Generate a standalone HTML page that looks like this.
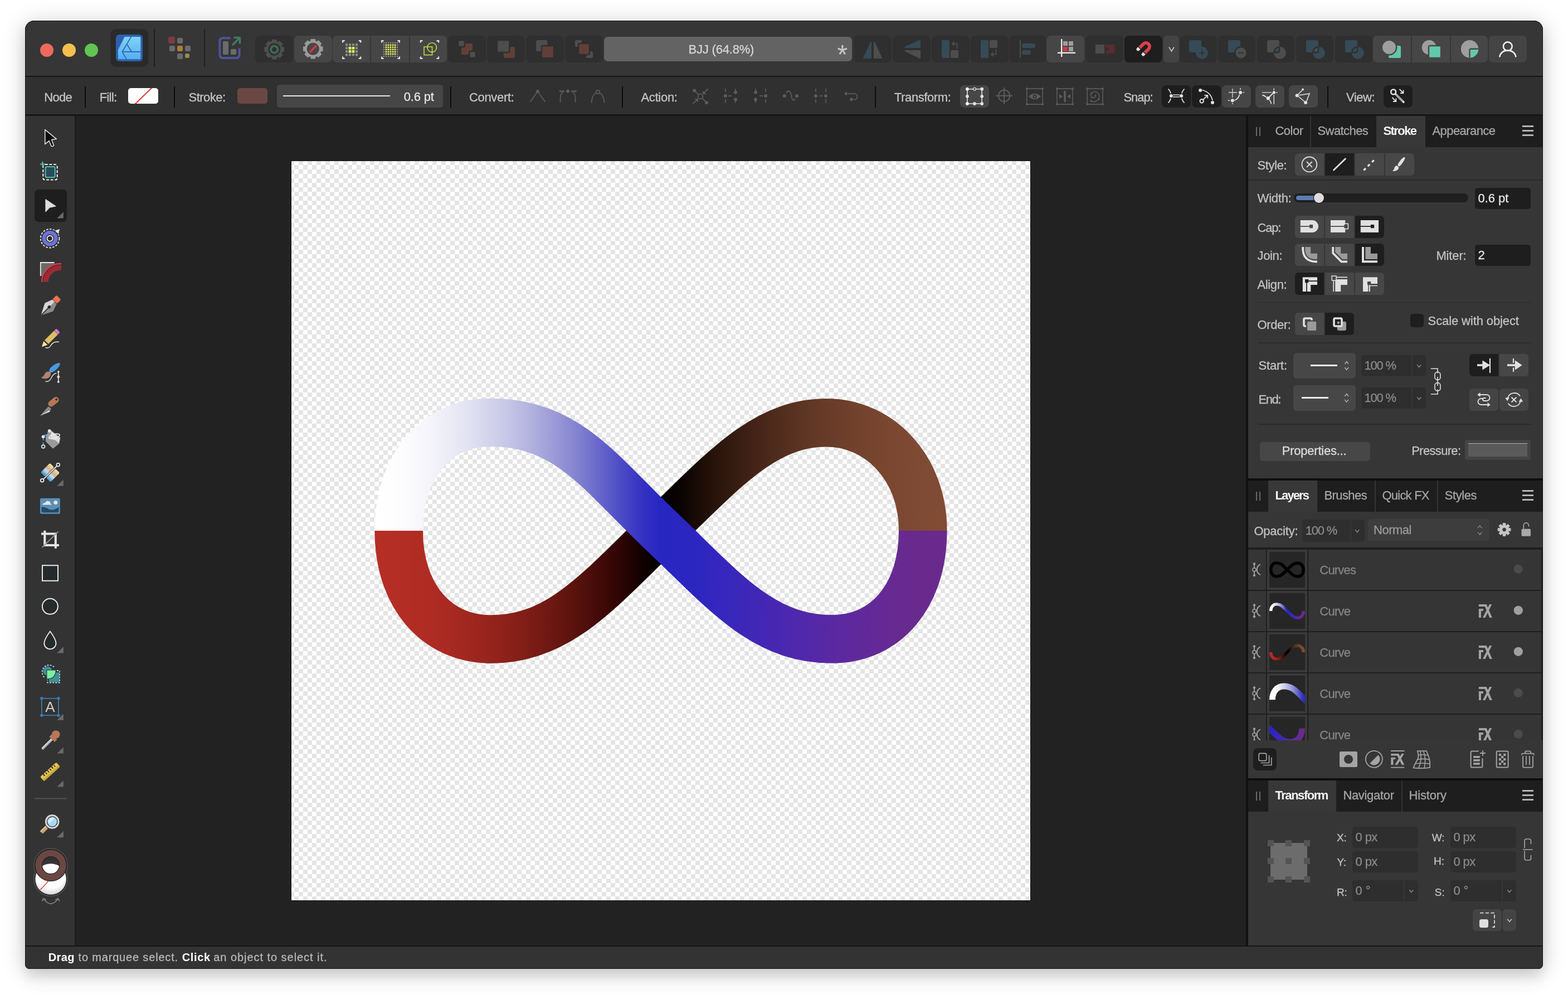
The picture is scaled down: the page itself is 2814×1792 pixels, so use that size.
<!DOCTYPE html>
<html><head><meta charset="utf-8"><title>BJJ - Affinity Designer</title>
<style>
html,body{margin:0;padding:0;}
body{width:2814px;height:1792px;background:#fff;position:relative;overflow:hidden;font-family:"Liberation Sans",sans-serif;}
#shadow{position:absolute;left:45px;top:37px;width:2724px;height:1701px;border-radius:16px 16px 8px 8px;background:#333;box-shadow:0 6px 42px rgba(0,0,0,.22),0 14px 20px rgba(0,0,0,.08);}
#win{will-change:transform;position:absolute;left:0;top:0;width:2814px;height:1792px;clip-path:inset(37px 45px 54px 45px round 16px 16px 8px 8px);}
#win div,#win span,#win svg{position:absolute;display:block;box-sizing:border-box;}
#win span{white-space:pre;line-height:1;-webkit-text-stroke:0.3px currentColor;}
#win svg{overflow:visible;}
</style></head><body>
<div id="shadow"></div>
<div id="win">
<div style="left:45px;top:37px;width:2724px;height:100px;background:#363636;"></div>
<div style="left:45px;top:136px;width:2724px;height:2px;background:#161616;"></div>
<div style="left:45px;top:138px;width:2724px;height:68px;background:#303030;"></div>
<div style="left:45px;top:205px;width:2724px;height:3px;background:#161616;"></div>
<div style="left:45px;top:208px;width:90px;height:1489px;background:#333333;"></div>
<div style="left:134px;top:208px;width:2px;height:1489px;background:#1b1b1b;"></div>
<div style="left:136px;top:208px;width:2100px;height:1489px;background:#222222;"></div>
<div style="left:2236px;top:208px;width:4px;height:1489px;background:#111111;"></div>
<div style="left:2240px;top:208px;width:529px;height:1489px;background:#363636;"></div>
<div style="left:45px;top:1696px;width:2724px;height:2px;background:#151515;"></div>
<div style="left:45px;top:1698px;width:2724px;height:40px;background:#333333;"></div>
<div style="left:522px;top:288px;width:1328px;height:1328px;background:#141414;"></div>
<div style="left:523px;top:289px;width:1326px;height:1326px;background-color:#fff;background-image:conic-gradient(#e4e4e4 25%,#fff 0 50%,#e4e4e4 0 75%,#fff 0);background-size:16px 16px;background-position:-11px -1px;"></div>
<svg style="left:523px;top:289px;" width="1326" height="1326" viewBox="523 289 1326 1326"><defs><linearGradient id="gA" gradientUnits="userSpaceOnUse" x1="672.4" y1="0" x2="1699.6" y2="0"><stop offset="0.0000" stop-color="#ffffff"/><stop offset="0.0312" stop-color="#fefefe"/><stop offset="0.0625" stop-color="#fafafd"/><stop offset="0.0938" stop-color="#f5f5fa"/><stop offset="0.1250" stop-color="#ededf7"/><stop offset="0.1562" stop-color="#e4e4f3"/><stop offset="0.1875" stop-color="#d9d8ee"/><stop offset="0.2188" stop-color="#cccce9"/><stop offset="0.2500" stop-color="#bdbde3"/><stop offset="0.2812" stop-color="#adadde"/><stop offset="0.3125" stop-color="#9c9bd8"/><stop offset="0.3438" stop-color="#8988d2"/><stop offset="0.3750" stop-color="#7473cd"/><stop offset="0.4062" stop-color="#5e5dc9"/><stop offset="0.4375" stop-color="#4746c5"/><stop offset="0.4688" stop-color="#3231c3"/><stop offset="0.5000" stop-color="#2826c2"/><stop offset="0.5312" stop-color="#2926c1"/><stop offset="0.5625" stop-color="#2d26c0"/><stop offset="0.5938" stop-color="#3326be"/><stop offset="0.6250" stop-color="#3927bb"/><stop offset="0.6562" stop-color="#3f27b7"/><stop offset="0.6875" stop-color="#4527b3"/><stop offset="0.7188" stop-color="#4b28af"/><stop offset="0.7500" stop-color="#5128aa"/><stop offset="0.7812" stop-color="#5628a5"/><stop offset="0.8125" stop-color="#5b29a0"/><stop offset="0.8438" stop-color="#5f299b"/><stop offset="0.8750" stop-color="#632996"/><stop offset="0.9062" stop-color="#662a92"/><stop offset="0.9375" stop-color="#682a8f"/><stop offset="0.9688" stop-color="#6a2a8d"/><stop offset="1" stop-color="#6a2a8c"/></linearGradient><linearGradient id="gB" gradientUnits="userSpaceOnUse" x1="672.4" y1="0" x2="1699.6" y2="0"><stop offset="0.0000" stop-color="#b62e25"/><stop offset="0.0312" stop-color="#b52e25"/><stop offset="0.0625" stop-color="#b22d24"/><stop offset="0.0938" stop-color="#ae2c23"/><stop offset="0.1250" stop-color="#a92a22"/><stop offset="0.1562" stop-color="#a22820"/><stop offset="0.1875" stop-color="#99251e"/><stop offset="0.2188" stop-color="#90221b"/><stop offset="0.2500" stop-color="#851f18"/><stop offset="0.2812" stop-color="#791b15"/><stop offset="0.3125" stop-color="#6b1712"/><stop offset="0.3438" stop-color="#5d130e"/><stop offset="0.3750" stop-color="#4c0e0a"/><stop offset="0.4062" stop-color="#3b0806"/><stop offset="0.4375" stop-color="#270403"/><stop offset="0.4688" stop-color="#100101"/><stop offset="0.5000" stop-color="#000000"/><stop offset="0.5312" stop-color="#080301"/><stop offset="0.5625" stop-color="#190a05"/><stop offset="0.5938" stop-color="#27130a"/><stop offset="0.6250" stop-color="#341b10"/><stop offset="0.6562" stop-color="#402216"/><stop offset="0.6875" stop-color="#4b291b"/><stop offset="0.7188" stop-color="#542f1f"/><stop offset="0.7500" stop-color="#5d3523"/><stop offset="0.7812" stop-color="#653a27"/><stop offset="0.8125" stop-color="#6c3e2a"/><stop offset="0.8438" stop-color="#72422d"/><stop offset="0.8750" stop-color="#77452f"/><stop offset="0.9062" stop-color="#7b4731"/><stop offset="0.9375" stop-color="#7e4933"/><stop offset="0.9688" stop-color="#804b34"/><stop offset="1" stop-color="#814b34"/></linearGradient></defs><path d="M715.7,951.9 C715.7,1067.4 781.5,1146.6 882,1146.6 C1004.6,1146.6 1077.5,1056.1 1186,951.9 C1302.0,839.4 1373.4,758.3 1483.4,758.3 C1576.9,758.3 1656.3,837.7 1656.3,951.9" fill="none" stroke="url(#gB)" stroke-width="86.6"/><path d="M715.7,951.9 C715.7,840.9 779.3,757.8 880,757.8 C1020.0,757.8 1078.0,850.4 1186,951.9 C1299.4,1059.6 1368.2,1146.4 1493.2,1146.4 C1591.3,1146.4 1656.3,1066.9 1656.3,951.9" fill="none" stroke="url(#gA)" stroke-width="86.6"/></svg>
<div style="left:72px;top:78px;width:24px;height:24px;background:#ed6a5e;border-radius:12px;"></div>
<div style="left:112px;top:78px;width:24px;height:24px;background:#f5bf4f;border-radius:12px;"></div>
<div style="left:152px;top:78px;width:24px;height:24px;background:#61c554;border-radius:12px;"></div>
<div style="left:198px;top:52px;width:68px;height:68px;background:#2a2a2a;border-radius:10px;"></div>
<svg style="left:208px;top:62px;" width="48" height="48" viewBox="0 0 48 48"><defs><linearGradient id="afg" x1="0" y1="0" x2="0" y2="1"><stop offset="0" stop-color="#7fd4fa"/><stop offset="1" stop-color="#56aef0"/></linearGradient></defs><rect width="48" height="48" rx="6" fill="#2d61ad"/><path d="M15.7 3.9H42.3Q44.3 3.9 44.3 5.9V42.3Q44.3 44.3 42.3 44.3H5.9Q3.9 44.3 3.9 42.3V27.5Z" fill="url(#afg)"/><path d="M27.5 3.9L11.4 30.8L19 44.3M11.4 30.8H44.3M20.2 17.9L28 30.5" fill="none" stroke="#2d61ad" stroke-width="1.7"/></svg>
<div style="left:276px;top:52px;width:2px;height:68px;background:#1f1f1f;"></div>
<svg style="left:0px;top:0px;" width="2814" height="1792" viewBox="0 0 2814 1792"><rect x="302" y="66" width="12" height="12" rx="2.5" fill="#7a3b45"/><rect x="318" y="68" width="10" height="10" rx="2.5" fill="#6b6b6b"/><rect x="304" y="82" width="10" height="10" rx="2.5" fill="#6b6b6b"/><rect x="318" y="82" width="10" height="10" rx="2.5" fill="#b07a3c"/><rect x="332" y="82" width="10" height="10" rx="2.5" fill="#6b6b6b"/><rect x="318" y="96" width="10" height="10" rx="2.5" fill="#6b6b6b"/><rect x="332" y="96" width="8" height="8" rx="2.5" fill="#9a8a4a"/></svg>
<div style="left:366px;top:52px;width:2px;height:68px;background:#1f1f1f;"></div>
<svg style="left:0px;top:0px;" width="2814" height="1792" viewBox="0 0 2814 1792"><path d="M412 68.3H400Q394.4 68.3 394.4 74V98Q394.4 103.9 400 103.9H424Q429.6 103.9 429.6 98V88" fill="none" stroke="#4f5496" stroke-width="4" stroke-linecap="round"/><rect x="400" y="74" width="10" height="24" rx="2" fill="#6b6b6b"/><rect x="414" y="88" width="10" height="10" rx="2" fill="#6b6b6b"/><path d="M418 80L430 68M421 67.5H430.5V77" fill="none" stroke="#3d7a68" stroke-width="3.4" stroke-linecap="round" stroke-linejoin="round"/></svg>
<div style="left:458px;top:64px;width:67.5px;height:48px;background:#2f2f2f;border-radius:8px;"></div>
<div style="left:528px;top:64px;width:67.5px;height:48px;background:#464646;border-radius:8px;"></div>
<div style="left:597px;top:64px;width:205px;height:48px;background:#464646;border-radius:8px;"></div>
<div style="left:664.3px;top:64px;width:1.6px;height:48px;background:#363636;"></div>
<div style="left:734.3px;top:64px;width:1.6px;height:48px;background:#363636;"></div>
<div style="left:804.3px;top:64px;width:67.6px;height:48px;background:#2f2f2f;border-radius:8px;"></div>
<div style="left:874px;top:64px;width:67.6px;height:48px;background:#2f2f2f;border-radius:8px;"></div>
<div style="left:944px;top:64px;width:67.6px;height:48px;background:#2f2f2f;border-radius:8px;"></div>
<div style="left:1014px;top:64px;width:67.6px;height:48px;background:#2f2f2f;border-radius:8px;"></div>
<div style="left:1084px;top:66px;width:445px;height:44px;background:#636363;border-radius:7px;"></div>
<div style="left:1532.3px;top:64px;width:67.5px;height:48px;background:#2f2f2f;border-radius:8px;"></div>
<div style="left:1602.3px;top:64px;width:67.5px;height:48px;background:#2f2f2f;border-radius:8px;"></div>
<div style="left:1672px;top:64px;width:67.5px;height:48px;background:#2f2f2f;border-radius:8px;"></div>
<div style="left:1742.2px;top:64px;width:67.5px;height:48px;background:#2f2f2f;border-radius:8px;"></div>
<div style="left:1810.5px;top:64px;width:67.5px;height:48px;background:#2f2f2f;border-radius:8px;"></div>
<div style="left:1878px;top:64px;width:68px;height:48px;background:#464646;border-radius:8px;"></div>
<div style="left:1948px;top:64px;width:67.7px;height:48px;background:#2f2f2f;border-radius:8px;"></div>
<div style="left:2018.3px;top:64px;width:67.7px;height:48px;background:#1e1e1e;border-radius:8px;"></div>
<div style="left:2088.2px;top:64px;width:27.8px;height:48px;background:#444444;border-radius:7px;"></div>
<div style="left:2117.2px;top:64px;width:67.2px;height:48px;background:#2f2f2f;border-radius:8px;"></div>
<div style="left:2186.3px;top:64px;width:67.2px;height:48px;background:#2f2f2f;border-radius:8px;"></div>
<div style="left:2256.2px;top:64px;width:67.2px;height:48px;background:#2f2f2f;border-radius:8px;"></div>
<div style="left:2326.2px;top:64px;width:67.2px;height:48px;background:#2f2f2f;border-radius:8px;"></div>
<div style="left:2396.3px;top:64px;width:67.2px;height:48px;background:#2f2f2f;border-radius:8px;"></div>
<div style="left:2464.2px;top:64px;width:205.8px;height:48px;background:#464646;border-radius:8px;"></div>
<div style="left:2532px;top:64px;width:1.8px;height:48px;background:#363636;"></div>
<div style="left:2602px;top:64px;width:1.8px;height:48px;background:#363636;"></div>
<div style="left:2672px;top:64px;width:68px;height:48px;background:#444444;border-radius:8px;"></div>
<span style="left:1235.5px;top:77.7px;font-size:22px;color:#d6d6d6;letter-spacing:-0.19px;">BJJ (64.8%)</span>
<span style="left:1502.6px;top:73.8px;font-size:48px;color:#c8c8c8;-webkit-text-stroke:0;">*</span>
<svg style="left:0px;top:0px;" width="2814" height="1792" viewBox="0 0 2814 1792"><path d="M488.4 74.8 L488.6 71.6 L495.8 71.6 L496.0 74.8 L499.2 76.2 L501.7 74.0 L506.8 79.1 L504.6 81.6 L506.0 84.8 L509.2 85.0 L509.2 92.2 L506.0 92.4 L504.6 95.6 L506.8 98.1 L501.7 103.2 L499.2 101.0 L496.0 102.4 L495.8 105.6 L488.6 105.6 L488.4 102.4 L485.2 101.0 L482.7 103.2 L477.6 98.1 L479.8 95.6 L478.4 92.4 L475.2 92.2 L475.2 85.0 L478.4 84.8 L479.8 81.6 L477.6 79.1 L482.7 74.0 L485.2 76.2Z M480.4 88.6 a11.8 11.8 0 1 0 23.6 0 a11.8 11.8 0 1 0 -23.6 0Z" fill="#4f4f4f" fill-rule="evenodd" stroke="#4f4f4f" stroke-width="1.6" stroke-linejoin="round"/><circle cx="492.2" cy="88.6" r="6.2" fill="none" stroke="#3b6b4e" stroke-width="4"/><path d="M558.0 73.9 L558.2 70.7 L565.4 70.7 L565.6 73.9 L568.8 75.3 L571.3 73.1 L576.4 78.2 L574.2 80.7 L575.6 83.9 L578.8 84.1 L578.8 91.3 L575.6 91.5 L574.2 94.7 L576.4 97.2 L571.3 102.3 L568.8 100.1 L565.6 101.5 L565.4 104.7 L558.2 104.7 L558.0 101.5 L554.8 100.1 L552.3 102.3 L547.2 97.2 L549.4 94.7 L548.0 91.5 L544.8 91.3 L544.8 84.1 L548.0 83.9 L549.4 80.7 L547.2 78.2 L552.3 73.1 L554.8 75.3Z M550.0 87.7 a11.8 11.8 0 1 0 23.6 0 a11.8 11.8 0 1 0 -23.6 0Z" fill="#9a9a9a" fill-rule="evenodd" stroke="#9a9a9a" stroke-width="1.6" stroke-linejoin="round"/><path d="M556.2 94L567.8 81.6" stroke="#d9363e" stroke-width="3.6"/><path d="M618.6 73.1H615.1V76.6" fill="none" stroke="#e4e4e4" stroke-width="2.2"/><path d="M643.8 73.1H647.3V76.6" fill="none" stroke="#e4e4e4" stroke-width="2.2"/><path d="M618.6 104.9H615.1V101.4" fill="none" stroke="#e4e4e4" stroke-width="2.2"/><path d="M643.8 104.9H647.3V101.4" fill="none" stroke="#e4e4e4" stroke-width="2.2"/><rect x="620.0" y="78.3" width="4" height="4" fill="#8f8f8f"/><rect x="620.0" y="84.3" width="4" height="4" fill="#8f8f8f"/><rect x="620.0" y="90.3" width="4" height="4" fill="#8f8f8f"/><rect x="620.0" y="96.3" width="4" height="4" fill="#8f8f8f"/><rect x="626.0" y="78.3" width="4" height="4" fill="#8f8f8f"/><rect x="625.6" y="83.9" width="4.8" height="4.8" fill="#e6f25a"/><rect x="625.6" y="89.9" width="4.8" height="4.8" fill="#e6f25a"/><rect x="626.0" y="96.3" width="4" height="4" fill="#8f8f8f"/><rect x="632.0" y="78.3" width="4" height="4" fill="#8f8f8f"/><rect x="631.6" y="83.9" width="4.8" height="4.8" fill="#e6f25a"/><rect x="631.6" y="89.9" width="4.8" height="4.8" fill="#e6f25a"/><rect x="632.0" y="96.3" width="4" height="4" fill="#8f8f8f"/><rect x="638.0" y="78.3" width="4" height="4" fill="#8f8f8f"/><rect x="638.0" y="84.3" width="4" height="4" fill="#8f8f8f"/><rect x="638.0" y="90.3" width="4" height="4" fill="#8f8f8f"/><rect x="638.0" y="96.3" width="4" height="4" fill="#8f8f8f"/><path d="M688.6 73.1H685.1V76.6" fill="none" stroke="#e4e4e4" stroke-width="2.2"/><path d="M713.4 73.1H716.9V76.6" fill="none" stroke="#e4e4e4" stroke-width="2.2"/><path d="M688.6 104.9H685.1V101.4" fill="none" stroke="#e4e4e4" stroke-width="2.2"/><path d="M713.4 104.9H716.9V101.4" fill="none" stroke="#e4e4e4" stroke-width="2.2"/><rect x="687.8" y="75.7" width="2.2" height="2.2" fill="#8f8f8f"/><rect x="687.8" y="79.7" width="2.2" height="2.2" fill="#8f8f8f"/><rect x="687.8" y="83.8" width="2.2" height="2.2" fill="#8f8f8f"/><rect x="687.8" y="87.8" width="2.2" height="2.2" fill="#8f8f8f"/><rect x="687.8" y="91.8" width="2.2" height="2.2" fill="#8f8f8f"/><rect x="687.8" y="95.8" width="2.2" height="2.2" fill="#8f8f8f"/><rect x="687.8" y="99.9" width="2.2" height="2.2" fill="#8f8f8f"/><rect x="691.8" y="75.7" width="2.2" height="2.2" fill="#8f8f8f"/><rect x="691.6" y="79.5" width="2.7" height="2.7" fill="#e6f25a"/><rect x="691.6" y="83.5" width="2.7" height="2.7" fill="#e6f25a"/><rect x="691.6" y="87.5" width="2.7" height="2.7" fill="#e6f25a"/><rect x="691.6" y="91.6" width="2.7" height="2.7" fill="#e6f25a"/><rect x="691.6" y="95.6" width="2.7" height="2.7" fill="#e6f25a"/><rect x="691.8" y="99.9" width="2.2" height="2.2" fill="#8f8f8f"/><rect x="695.9" y="75.7" width="2.2" height="2.2" fill="#8f8f8f"/><rect x="695.6" y="79.5" width="2.7" height="2.7" fill="#e6f25a"/><rect x="695.6" y="83.5" width="2.7" height="2.7" fill="#e6f25a"/><rect x="695.6" y="87.5" width="2.7" height="2.7" fill="#e6f25a"/><rect x="695.6" y="91.6" width="2.7" height="2.7" fill="#e6f25a"/><rect x="695.6" y="95.6" width="2.7" height="2.7" fill="#e6f25a"/><rect x="695.9" y="99.9" width="2.2" height="2.2" fill="#8f8f8f"/><rect x="699.9" y="75.7" width="2.2" height="2.2" fill="#8f8f8f"/><rect x="699.6" y="79.5" width="2.7" height="2.7" fill="#e6f25a"/><rect x="699.6" y="83.5" width="2.7" height="2.7" fill="#e6f25a"/><rect x="699.6" y="87.5" width="2.7" height="2.7" fill="#e6f25a"/><rect x="699.6" y="91.6" width="2.7" height="2.7" fill="#e6f25a"/><rect x="699.6" y="95.6" width="2.7" height="2.7" fill="#e6f25a"/><rect x="699.9" y="99.9" width="2.2" height="2.2" fill="#8f8f8f"/><rect x="703.9" y="75.7" width="2.2" height="2.2" fill="#8f8f8f"/><rect x="703.7" y="79.5" width="2.7" height="2.7" fill="#e6f25a"/><rect x="703.7" y="83.5" width="2.7" height="2.7" fill="#e6f25a"/><rect x="703.7" y="87.5" width="2.7" height="2.7" fill="#e6f25a"/><rect x="703.7" y="91.6" width="2.7" height="2.7" fill="#e6f25a"/><rect x="703.7" y="95.6" width="2.7" height="2.7" fill="#e6f25a"/><rect x="703.9" y="99.9" width="2.2" height="2.2" fill="#8f8f8f"/><rect x="708.0" y="75.7" width="2.2" height="2.2" fill="#8f8f8f"/><rect x="707.7" y="79.5" width="2.7" height="2.7" fill="#e6f25a"/><rect x="707.7" y="83.5" width="2.7" height="2.7" fill="#e6f25a"/><rect x="707.7" y="87.5" width="2.7" height="2.7" fill="#e6f25a"/><rect x="707.7" y="91.6" width="2.7" height="2.7" fill="#e6f25a"/><rect x="707.7" y="95.6" width="2.7" height="2.7" fill="#e6f25a"/><rect x="708.0" y="99.9" width="2.2" height="2.2" fill="#8f8f8f"/><rect x="712.0" y="75.7" width="2.2" height="2.2" fill="#8f8f8f"/><rect x="712.0" y="79.7" width="2.2" height="2.2" fill="#8f8f8f"/><rect x="712.0" y="83.8" width="2.2" height="2.2" fill="#8f8f8f"/><rect x="712.0" y="87.8" width="2.2" height="2.2" fill="#8f8f8f"/><rect x="712.0" y="91.8" width="2.2" height="2.2" fill="#8f8f8f"/><rect x="712.0" y="95.8" width="2.2" height="2.2" fill="#8f8f8f"/><rect x="712.0" y="99.9" width="2.2" height="2.2" fill="#8f8f8f"/><path d="M758.4 73.1H754.9V76.6" fill="none" stroke="#e4e4e4" stroke-width="2.2"/><path d="M783.6 73.1H787.1V76.6" fill="none" stroke="#e4e4e4" stroke-width="2.2"/><path d="M758.4 104.9H754.9V101.4" fill="none" stroke="#e4e4e4" stroke-width="2.2"/><path d="M783.6 104.9H787.1V101.4" fill="none" stroke="#e4e4e4" stroke-width="2.2"/><rect x="761" y="84" width="14.6" height="14.6" fill="none" stroke="#c5d945" stroke-width="1.6"/><circle cx="775.2" cy="85.1" r="8.3" fill="none" stroke="#c5d945" stroke-width="1.6"/><rect x="822" y="72" width="12" height="12" rx="2.5" fill="#4d4d4d"/><rect x="842" y="92" width="12" height="12" rx="2.5" fill="#4d4d4d"/><rect x="828" y="78" width="20" height="20" rx="2.5" fill="#613f37"/><rect x="822" y="72" width="12" height="12" rx="2.5" fill="#4d4d4d" stroke="#2f2f2f" stroke-width="2.4"/><rect x="842" y="92" width="12" height="12" rx="2.5" fill="#4d4d4d" stroke="#2f2f2f" stroke-width="2.4"/><rect x="904" y="84" width="20" height="20" rx="2.5" fill="#613f37"/><rect x="892" y="72" width="22.4" height="22" rx="2.5" fill="#4d4d4d" stroke="#2f2f2f" stroke-width="2.4"/><rect x="962.2" y="72" width="20" height="20" rx="2.5" fill="#4d4d4d"/><rect x="972" y="82" width="22" height="22" rx="2.5" fill="#613f37" stroke="#2f2f2f" stroke-width="2.4"/><rect x="1032" y="72" width="12" height="12" rx="2.5" fill="#4d4d4d"/><rect x="1052" y="92" width="12" height="12" rx="2.5" fill="#4d4d4d"/><rect x="1038" y="78" width="20" height="20" rx="2.5" fill="#613f37" stroke="#2f2f2f" stroke-width="2.4"/><path d="M1550 104L1563 75.8V104Z" fill="#364a57" stroke="#364a57" stroke-width="2" stroke-linejoin="round"/><path d="M1582 104L1569 75.8V104Z" fill="#4d4d4d" stroke="#4d4d4d" stroke-width="2" stroke-linejoin="round"/><path d="M1624.5 85L1651 72.2V85Z" fill="#364a57" stroke="#364a57" stroke-width="2" stroke-linejoin="round"/><path d="M1624.5 91L1651 104V91Z" fill="#4d4d4d" stroke="#4d4d4d" stroke-width="2" stroke-linejoin="round"/><rect x="1690" y="72" width="14" height="32" rx="2" fill="#364a57"/><rect x="1706" y="90" width="14" height="14" rx="2" fill="#4d4d4d"/><path d="M1709.5 78.5H1717.5V87.5M1712.5 75L1709 78.5L1712.5 82" fill="none" stroke="#4d4d4d" stroke-width="1.8"/><rect x="1760" y="72" width="14" height="32" rx="2" fill="#364a57"/><rect x="1776" y="72" width="14" height="14" rx="2" fill="#4d4d4d"/><path d="M1787.5 88.5V97.5H1779M1782.5 94L1779 97.5L1782.5 101" fill="none" stroke="#4d4d4d" stroke-width="1.8"/><rect x="1830" y="72" width="2" height="32" fill="#4d4d4d"/><rect x="1834" y="78" width="24" height="8" rx="3" fill="#364a57"/><rect x="1834" y="90" width="16" height="8" rx="3" fill="#364a57"/><rect x="1904" y="70" width="2.4" height="32" fill="#e8e8e8"/><rect x="1898" y="93.6" width="32" height="2.4" fill="#e8e8e8"/><rect x="1908" y="74" width="8" height="8" fill="#9e9e9e"/><rect x="1918" y="74" width="8" height="8" fill="#9e9e9e"/><rect x="1918" y="84" width="8" height="8" fill="#9e9e9e"/><rect x="1908" y="84" width="8" height="8" fill="#d9363e"/><rect x="1966" y="80" width="16" height="16" fill="#4d4d4d"/><path d="M1984 80H2000V96H1984V92L1992 88L1984 84Z" fill="#5a2c30"/><g transform="translate(2056.5 83.5) rotate(45)"><path d="M-6.5 9.2V0A6.5 6.5 0 0 1 6.5 0V9.2" fill="none" stroke="#d9404a" stroke-width="6"/><path d="M-9.5 10.5h6v2.8a3 3 0 0 1-6 0zM3.5 10.5h6v2.8a3 3 0 0 1-6 0z" fill="#dcdcdc"/></g><path d="M2098 84.5L2102.5 92L2107 84.5" fill="none" stroke="#c8c8c8" stroke-width="1.6"/><rect x="2134" y="72" width="22" height="22" rx="3" fill="#364a57"/><circle cx="2157" cy="94.8" r="10.8" fill="#364a57"/><path d="M2152 94.8H2162M2157 89.8V99.8" stroke="#2f2f2f" stroke-width="1.8"/><rect x="2204" y="72" width="22" height="22" rx="3" fill="#364a57"/><circle cx="2227" cy="94.8" r="10.8" fill="#4d4d4d" stroke="#2f2f2f" stroke-width="2.4"/><path d="M2222 94.8H2232" stroke="#2f2f2f" stroke-width="1.8"/><rect x="2274" y="72" width="22" height="22" rx="3" fill="#4d4d4d"/><circle cx="2297" cy="94.8" r="10.8" fill="#4d4d4d"/><clipPath id="ca"><rect x="2274" y="72" width="22" height="22" rx="3"/></clipPath><circle cx="2297" cy="94.8" r="10.8" fill="#364a57" stroke="#2f2f2f" stroke-width="2.4" clip-path="url(#ca)"/><clipPath id="cab"><circle cx="2297" cy="94.8" r="10.8"/></clipPath><rect x="2274" y="72" width="22" height="22" rx="3" fill="none" stroke="#2f2f2f" stroke-width="2.4" clip-path="url(#cab)"/><rect x="2344" y="72" width="22" height="22" rx="3" fill="#364a57"/><circle cx="2367" cy="94.8" r="10.8" fill="#364a57"/><clipPath id="cb"><rect x="2344" y="72" width="22" height="22" rx="3"/></clipPath><circle cx="2367" cy="94.8" r="10.8" fill="#4d4d4d" stroke="#2f2f2f" stroke-width="2.4" clip-path="url(#cb)"/><clipPath id="cbb"><circle cx="2367" cy="94.8" r="10.8"/></clipPath><rect x="2344" y="72" width="22" height="22" rx="3" fill="none" stroke="#2f2f2f" stroke-width="2.4" clip-path="url(#cbb)"/><rect x="2414" y="72" width="22" height="22" rx="3" fill="#364a57"/><circle cx="2437" cy="94.8" r="10.8" fill="#364a57"/><clipPath id="cc"><rect x="2414" y="72" width="22" height="22" rx="3"/></clipPath><circle cx="2437" cy="94.8" r="10.8" fill="#364a57" stroke="#2f2f2f" stroke-width="2.4" clip-path="url(#cc)"/><clipPath id="ccb"><circle cx="2437" cy="94.8" r="10.8"/></clipPath><rect x="2414" y="72" width="22" height="22" rx="3" fill="none" stroke="#2f2f2f" stroke-width="2.4" clip-path="url(#ccb)"/><rect x="2492" y="82" width="22" height="22" rx="2.5" fill="#62c8ab"/><circle cx="2493" cy="85.1" r="13.2" fill="#9e9e9e" stroke="#464646" stroke-width="2.4"/><circle cx="2564.7" cy="85.1" r="13" fill="#9e9e9e"/><rect x="2564" y="82" width="22" height="22" rx="2.5" fill="#62c8ab" stroke="#464646" stroke-width="2.4"/><circle cx="2637.5" cy="87.8" r="15.7" fill="#9e9e9e"/><clipPath id="cq"><circle cx="2637.5" cy="87.8" r="15.7"/></clipPath><rect x="2637.5" y="87.8" width="20" height="20" rx="2.5" fill="#62c8ab" stroke="#464646" stroke-width="2.4" clip-path="url(#cq)"/><circle cx="2705.8" cy="83.2" r="7.8" fill="none" stroke="#f0f0f0" stroke-width="2.6"/><path d="M2691.3 102.3A14.6 13 0 0 1 2720.4 102.3" fill="none" stroke="#f0f0f0" stroke-width="2.6"/></svg>
<span style="left:79.3px;top:163.7px;font-size:22px;color:#c4c4c4;letter-spacing:-0.73px;">Node</span>
<div style="left:152px;top:154.5px;width:2px;height:38px;background:#0c0c0c;"></div>
<span style="left:178.8px;top:163.7px;font-size:22px;color:#c4c4c4;letter-spacing:-0.75px;">Fill:</span>
<div style="left:229.8px;top:157.8px;width:54.4px;height:28.4px;background:#ffffff;border-radius:5px;overflow:hidden;"><svg style="left:0;top:0" width="54" height="28"><path d="M12 29L43 -1" stroke="#e8332c" stroke-width="2"/></svg></div>
<div style="left:312px;top:154.5px;width:2px;height:38px;background:#0c0c0c;"></div>
<span style="left:338.5px;top:163.7px;font-size:22px;color:#c4c4c4;letter-spacing:-0.53px;">Stroke:</span>
<div style="left:425.7px;top:157.8px;width:54.6px;height:28.4px;background:#6b4744;border-radius:5px;"></div>
<div style="left:497px;top:152px;width:298px;height:41px;background:#464646;border-radius:5px;"></div>
<div style="left:507.5px;top:171px;width:192.5px;height:2.2px;background:#e8e8e8;"></div>
<span style="left:724.7px;top:162.7px;font-size:22px;color:#e4e4e4;letter-spacing:-0.15px;">0.6 pt</span>
<div style="left:808px;top:154.5px;width:2px;height:38px;background:#0c0c0c;"></div>
<span style="left:842.0px;top:163.7px;font-size:22px;color:#c4c4c4;letter-spacing:-0.33px;">Convert:</span>
<div style="left:1116px;top:154.5px;width:2px;height:38px;background:#0c0c0c;"></div>
<span style="left:1150.4px;top:163.7px;font-size:22px;color:#c4c4c4;letter-spacing:-0.28px;">Action:</span>
<div style="left:1570px;top:154.5px;width:2px;height:38px;background:#0c0c0c;"></div>
<span style="left:1605.0px;top:163.7px;font-size:22px;color:#c4c4c4;letter-spacing:-0.42px;">Transform:</span>
<div style="left:1723.2px;top:153px;width:51.5px;height:40px;background:#474747;border-radius:8px;"></div>
<span style="left:2016.5px;top:163.7px;font-size:22px;color:#c4c4c4;letter-spacing:-1.07px;">Snap:</span>
<div style="left:2085px;top:153px;width:51.8px;height:40px;background:#1e1e1e;border-radius:8px;"></div>
<div style="left:2139.2px;top:153px;width:51.8px;height:40px;background:#1e1e1e;border-radius:8px;"></div>
<div style="left:2193.2px;top:153px;width:51.8px;height:40px;background:#464646;border-radius:8px;"></div>
<div style="left:2253px;top:153px;width:51.8px;height:40px;background:#464646;border-radius:8px;"></div>
<div style="left:2312.8px;top:153px;width:52.2px;height:40px;background:#464646;border-radius:8px;"></div>
<div style="left:2382px;top:154.5px;width:2px;height:38px;background:#0c0c0c;"></div>
<span style="left:2416.0px;top:163.7px;font-size:22px;color:#c4c4c4;letter-spacing:-0.50px;">View:</span>
<div style="left:2483px;top:153px;width:52px;height:40px;background:#1e1e1e;border-radius:8px;"></div>
<svg style="left:0px;top:0px;" width="2814" height="1792" viewBox="0 0 2814 1792"><path d="M951.4 183L964.8 164L978.6 183" fill="none" stroke="#5c5c5c" stroke-width="1.8" /><circle cx="964.8" cy="164" r="3" fill="#5c5c5c"/><path d="M1005.6 183.4V176Q1005.6 166 1013 163.5H1005.5M1032.5 183.4V176Q1032.5 166 1025 163.5H1033" fill="none" stroke="#5c5c5c" stroke-width="1.8" /><circle cx="1019" cy="163.6" r="3" fill="#5c5c5c"/><circle cx="1005.5" cy="163.5" r="1.8" fill="#5c5c5c"/><circle cx="1033" cy="163.5" r="1.8" fill="#5c5c5c"/><path d="M1061.5 184.5Q1062.5 170 1069.5 167M1084.5 184.5Q1083.5 170 1076.5 167" fill="none" stroke="#5c5c5c" stroke-width="1.8" /><circle cx="1073" cy="165" r="3.2" fill="none" stroke="#5c5c5c" stroke-width="1.8"/><circle cx="1256.9" cy="172.9" r="4.4" fill="none" stroke="#5c5c5c" stroke-width="1.8"/><circle cx="1246.1" cy="162.4" r="3" fill="#5c5c5c"/><circle cx="1268.1" cy="184.2" r="3" fill="#5c5c5c"/><path d="M1246.1 162.4L1253.5 169.5M1268.1 184.2L1260.5 176.3M1270.5 159.5L1263 167M1243.5 186.3L1251 178.8" fill="none" stroke="#5c5c5c" stroke-width="1.8" /><path d="M1261.5 163.5V168.5H1266.5ZM1252.5 182.5V177.3H1247.3Z" fill="#5c5c5c" stroke="#5c5c5c" stroke-width="1"/><path d="M1301.9 159V165M1301.9 178V184.6M1307 172H1312.7M1319.9 159V165M1319.9 178.6V184.6" fill="none" stroke="#5c5c5c" stroke-width="1.8" /><circle cx="1301.9" cy="172" r="3" fill="#5c5c5c"/><circle cx="1319.9" cy="165.7" r="3" fill="#5c5c5c"/><circle cx="1319.9" cy="178.6" r="3" fill="#5c5c5c"/><path d="M1356 159V165M1356 178.6V184.6M1363 172H1368.7M1374 159V165M1374 178V184.6" fill="none" stroke="#5c5c5c" stroke-width="1.8" /><circle cx="1374" cy="172" r="3" fill="#5c5c5c"/><circle cx="1356" cy="165.7" r="3" fill="#5c5c5c"/><circle cx="1356" cy="178.6" r="3" fill="#5c5c5c"/><circle cx="1407.9" cy="172" r="3" fill="#5c5c5c"/><circle cx="1430" cy="172" r="3" fill="#5c5c5c"/><path d="M1411 167Q1415 160 1418.5 166Q1419.5 168 1420.5 174Q1423 184 1427 177" fill="none" stroke="#5c5c5c" stroke-width="1.8" /><path d="M1464 159V165M1464 178V184.6M1470.5 172H1476M1482 159V165M1482 178V184.6" fill="none" stroke="#5c5c5c" stroke-width="1.8" /><circle cx="1464" cy="172" r="3" fill="#5c5c5c"/><circle cx="1482" cy="172" r="3" fill="#5c5c5c"/><path d="M1521 168.1H1534A5.3 5.3 0 0 1 1534 178.6H1532" fill="none" stroke="#5c5c5c" stroke-width="1.8" /><circle cx="1528" cy="178.2" r="3" fill="#5c5c5c"/><path d="M1514.5 168.1L1520 164.6V171.6Z" fill="#5c5c5c"/><path d="M1735.9 159.7H1762.2V186H1735.9Z" fill="none" stroke="#e2e2e2" stroke-width="1.6" /><circle cx="1735.9" cy="159.7" r="2.9" fill="#f4f4f4"/><circle cx="1762.2" cy="159.7" r="2.9" fill="#e2e2e2"/><circle cx="1735.9" cy="172.8" r="2.9" fill="#e2e2e2"/><circle cx="1762.2" cy="172.8" r="2.9" fill="#e2e2e2"/><circle cx="1735.9" cy="186" r="2.9" fill="#f4f4f4"/><circle cx="1749" cy="186" r="2.9" fill="#e2e2e2"/><circle cx="1762.2" cy="186" r="2.9" fill="#e2e2e2"/><circle cx="1749" cy="159.7" r="2.4" fill="#474747" stroke="#e2e2e2" stroke-width="1.2"/><circle cx="1802.1" cy="171.8" r="10.3" fill="none" stroke="#5c5c5c" stroke-width="2"/><path d="M1787 171.8H1817M1802.1 157V187" fill="none" stroke="#5c5c5c" stroke-width="2" /><path d="M1842.8 159.1H1871.2V187.1H1842.8Z" fill="none" stroke="#5c5c5c" stroke-width="1.6" /><circle cx="1842.8" cy="159.1" r="2" fill="#5c5c5c"/><circle cx="1871.2" cy="159.1" r="2" fill="#5c5c5c"/><circle cx="1842.8" cy="187.1" r="2" fill="#5c5c5c"/><circle cx="1871.2" cy="187.1" r="2" fill="#5c5c5c"/><path d="M1846 173Q1857 162.5 1868 173Q1857 183.5 1846 173Z" fill="#5c5c5c"/><circle cx="1857" cy="173" r="3.6" fill="#303030"/><circle cx="1857" cy="173" r="1.8" fill="#5c5c5c"/><path d="M1897 159.1H1925V187.1H1897Z" fill="none" stroke="#5c5c5c" stroke-width="1.6" /><circle cx="1897" cy="159.1" r="2" fill="#5c5c5c"/><circle cx="1925" cy="159.1" r="2" fill="#5c5c5c"/><circle cx="1897" cy="187.1" r="2" fill="#5c5c5c"/><circle cx="1925" cy="187.1" r="2" fill="#5c5c5c"/><rect x="1909.3" y="163" width="3.4" height="20" fill="#5c5c5c"/><path d="M1901 169L1907 173L1901 177ZM1921 169L1915 173L1921 177Z" fill="#5c5c5c"/><path d="M1951.2 159.1H1979V187.1H1951.2Z" fill="none" stroke="#5c5c5c" stroke-width="1.6" /><circle cx="1951.2" cy="159.1" r="2" fill="#5c5c5c"/><circle cx="1979" cy="159.1" r="2" fill="#5c5c5c"/><circle cx="1951.2" cy="187.1" r="2" fill="#5c5c5c"/><circle cx="1979" cy="187.1" r="2" fill="#5c5c5c"/><path d="M1958 181A9.5 9.5 0 0 0 1972 176A8 8 0 0 0 1959 167A5 5 0 0 0 1962.5 175.5Q1966 175 1966 171" fill="none" stroke="#5c5c5c" stroke-width="1.6" /><circle cx="1958" cy="181" r="1.8" fill="#5c5c5c"/><circle cx="1972" cy="178" r="1.5" fill="#5c5c5c"/><circle cx="1959" cy="167" r="1.5" fill="#5c5c5c"/><circle cx="1966" cy="171" r="1.5" fill="#5c5c5c"/><circle cx="2101.9" cy="171.9" r="3" fill="#e2e2e2"/><circle cx="2120.2" cy="171.9" r="3" fill="#e2e2e2"/><path d="M2105 170.2H2117M2105 173.8H2117" fill="none" stroke="#e2e2e2" stroke-width="1.4" /><path d="M2096.5 159.5Q2100.5 164 2101 167.5M2096.5 184.5Q2100.5 180 2101 176.3M2125.5 159.5Q2121.5 164 2121 167.5M2125.5 184.5Q2121.5 180 2121 176.3" fill="none" stroke="#e2e2e2" stroke-width="1.8" /><circle cx="2154.1" cy="161.9" r="3" fill="#e2e2e2"/><circle cx="2176" cy="183.9" r="3" fill="#e2e2e2"/><path d="M2157.5 161.5Q2173 165.5 2176 180" fill="none" stroke="#e2e2e2" stroke-width="1.8" /><circle cx="2156.7" cy="181.3" r="3.2" fill="none" stroke="#e2e2e2" stroke-width="2"/><path d="M2159.2 178.8L2166.5 171.5M2161.5 170.8H2167.2V176.5" fill="none" stroke="#e2e2e2" stroke-width="1.8" /><circle cx="2226.1" cy="165.9" r="3" fill="#e2e2e2"/><circle cx="2211.9" cy="180.3" r="3" fill="#e2e2e2"/><path d="M2224.5 169.5Q2222.5 177.5 2215.5 180" fill="none" stroke="#e2e2e2" stroke-width="1.8" /><path d="M2205 165.9H2220M2211.9 159V175" fill="none" stroke="#bdbdbd" stroke-width="1.6" /><path d="M2226.1 158V161M2230.5 165.9H2233M2204 180.3H2207M2211.9 184.5V187" fill="none" stroke="#e2e2e2" stroke-width="1.4" /><circle cx="2286.3" cy="165.9" r="2.6" fill="#e2e2e2"/><circle cx="2275.9" cy="176.3" r="3.2" fill="#e2e2e2"/><path d="M2265 165.9H2282M2290 165.9H2293M2286.3 158.5V162M2286.3 170V187" fill="none" stroke="#e2e2e2" stroke-width="1.4" /><path d="M2278 174L2284.5 167.5M2265.5 170.5Q2270 171.5 2272.5 174.5M2278.5 179.5Q2281 182.5 2281.5 186.5" fill="none" stroke="#e2e2e2" stroke-width="1.8" /><circle cx="2338.1" cy="160.5" r="2" fill="#e2e2e2"/><circle cx="2327.7" cy="171.3" r="3" fill="#e2e2e2"/><circle cx="2343.1" cy="183.9" r="3" fill="#e2e2e2"/><path d="M2337 161.8L2330 169M2330 173L2341 182M2345 181L2350 168L2331.5 170.8" fill="none" stroke="#e2e2e2" stroke-width="1.6" /><circle cx="2500.6" cy="164.9" r="4.4" fill="none" stroke="#e2e2e2" stroke-width="2.6"/><path d="M2504 168.3L2520 184.3" fill="none" stroke="#e2e2e2" stroke-width="3.4" /><path d="M2505.5 169.8L2517 181.3" fill="none" stroke="#1e1e1e" stroke-width="1" /><path d="M2511.5 160L2518 166.5M2518.5 161.5V167H2513M2498.5 175L2505 181.5M2505.5 176.5V182H2500" fill="none" stroke="#e2e2e2" stroke-width="1.8" /></svg>
<div style="left:62px;top:340px;width:58px;height:58px;background:#1e1e1e;border-radius:7px;"></div>
<svg style="left:0px;top:0px;" width="2814" height="1792" viewBox="0 0 2814 1792"><path d="M80.8 232.6V258.6L88 252.6L92.2 262.2Q94.5 263.2 96.6 261L92.6 250.6L101.3 249.3Z" fill="#0a0a0a" stroke="#e8e8e8" stroke-width="1.5" stroke-linejoin="round"/><rect x="77.3" y="295" width="25.4" height="27.6" rx="3.5" fill="none" stroke="#f0f0f0" stroke-width="2" stroke-dasharray="5 2.6"/><rect x="81.5" y="299.2" width="17.2" height="19" rx="2.5" fill="#2a4a60" stroke="#4fd1b0" stroke-width="1.8"/><path d="M72 294.4H80.7M76.4 289.8V298.8" stroke="#4fd1b0" stroke-width="1.8"/><path d="M81.9 357.6L100.3 369.9L89.1 372.3L81.9 380Z" fill="#dcdcdc" stroke="#dcdcdc" stroke-width="1" stroke-linejoin="round"/><path d="M113.9 380.2V391.59999999999997H102.2Z" fill="#6a6a6a"/><circle cx="89.6" cy="427.7" r="16.8" fill="none" stroke="#f0f0f0" stroke-width="1.8" stroke-dasharray="3.6 2.4"/><circle cx="89.6" cy="427.7" r="10.7" fill="none" stroke="#6b72d6" stroke-width="6.6"/><circle cx="89.6" cy="427.7" r="6.2" fill="#2a2a2a"/><circle cx="89.6" cy="427.7" r="5" fill="none" stroke="#ececec" stroke-width="2"/><path d="M97.6 413.5L107.6 410.2L105.4 420.6Z" fill="#e4e4e4" stroke="#333333" stroke-width="1"/><clipPath id="cr"><rect x="70" y="468" width="40" height="37.800"/></clipPath><g clip-path="url(#cr)"><rect x="72.800" y="471" width="24.800" height="24" fill="#6a6a6a"/><path d="M72.800 495V471H97.600" fill="none" stroke="#e8e8e8" stroke-width="1.800"/><circle cx="107.800" cy="505.800" r="33" fill="#333333"/><circle cx="107.800" cy="505.800" r="27.400" fill="none" stroke="#9e2a35" stroke-width="12.800"/><circle cx="107.800" cy="505.800" r="32.800" fill="none" stroke="#ea3c4e" stroke-width="1.800"/><circle cx="107.800" cy="505.800" r="30.600" fill="none" stroke="#333333" stroke-width="1.200"/></g><g transform="translate(89.500 549.500) rotate(45) scale(1.1)"><rect x="-5.2" y="-20.5" width="10.4" height="9.4" rx="2" fill="#f07050"/><path d="M-5 -10.5H5L9.5 2L0 20.5L-9.5 2Z" fill="#8c8c8c"/><path d="M-5 -10.5H0V20.5L-9.5 2Z" fill="#d6d6d6"/><path d="M0 20V3" stroke="#2c2c2c" stroke-width="1.4"/><circle cx="0" cy="1.5" r="2.6" fill="#2c2c2c"/></g><g transform="translate(89.800 607.300) rotate(45) scale(1.06)"><rect x="-4.6" y="-19.5" width="9.2" height="5" rx="2" fill="#e070d8"/><rect x="-4.6" y="-14.2" width="9.2" height="24" fill="#d9c063"/><rect x="-4.6" y="8.5" width="9.2" height="1.6" fill="#2a2a2a"/><path d="M-4.6 10.6H4.6L0 19.8Z" fill="#f0e2a8"/></g><path d="M81.5 623.5Q88 626 92 618.5Q96 612 106 613.5" fill="none" stroke="#e8e8e8" stroke-width="1.5"/><g transform="translate(98 659.500) rotate(50)"><path d="M0 -13Q5.200 -8 4.600 4Q4 11.500 0 12Q-4 11.500 -4.600 4Q-5.200 -8 0 -13Z" fill="#4a98e0"/></g><path d="M90.5 667.5Q84 664.5 80 671Q78 675.5 73.5 677.5Q84 682 89.5 675.5Q92 672 90.5 667.5Z" fill="#b08474"/><path d="M81.5 684Q88 686 92 678Q96 669.5 101.5 669.5" fill="none" stroke="#e0e0e0" stroke-width="1.5"/><path d="M104.8 667V685" stroke="#e0e0e0" stroke-width="1.6"/><circle cx="104.8" cy="667" r="1.9" fill="#e0e0e0"/><circle cx="104.8" cy="685" r="1.9" fill="#e0e0e0"/><circle cx="104.8" cy="676" r="2.4" fill="#e0e0e0"/><g transform="translate(96.2 720.6) rotate(51)"><rect x="-5.3" y="-10.5" width="10.6" height="21.5" rx="5.2" fill="#b87858"/><circle cx="0" cy="-6.3" r="1.9" fill="#2c2c2c"/></g><path d="M86.8 729L72 745.8L89.5 738.5L91.8 733Z" fill="#8a8a8a"/><path d="M72 745.8L89.5 738.5L88.4 736.3Z" fill="#e6e6e6"/><path d="M83 781L92 773.5L107.6 785.5L105.5 795L95 803.5L83 791.5Z" fill="#9a9a9a" stroke="#9a9a9a" stroke-width="2" stroke-linejoin="round"/><path d="M92 773.5L107.6 785.5L105.5 795L100 790L90 787Z" fill="#dcdcdc"/><ellipse cx="97.5" cy="782.5" rx="10" ry="3.6" transform="rotate(-14 97.5 782.5)" fill="none" stroke="#ececec" stroke-width="1.8"/><path d="M88.5 773.5L77.6 783.3V797" fill="none" stroke="#3c8ee0" stroke-width="2.2" stroke-dasharray="5 3.2"/><circle cx="88.8" cy="773" r="2.9" fill="#e8e8e8"/><circle cx="77.6" cy="783.3" r="2.9" fill="#e8e8e8"/><circle cx="77.6" cy="801" r="2.9" fill="#333333" stroke="#e8e8e8" stroke-width="1.6"/><defs><linearGradient id="tg" x1="0" y1="0" x2="0" y2="1"><stop offset="0" stop-color="#efe6a8"/><stop offset="0.38" stop-color="#dcae88"/><stop offset="0.62" stop-color="#bfe2f4"/><stop offset="1" stop-color="#3c8ac0"/></linearGradient></defs><g transform="translate(90 847.8) rotate(45)"><rect x="-12.4" y="-11.8" width="10.6" height="23.6" rx="2" fill="url(#tg)"/><rect x="1.8" y="-11.8" width="10.6" height="23.6" rx="2" fill="url(#tg)"/></g><path d="M77.5 859.8L102.5 835.5" stroke="#ececec" stroke-width="1.8"/><circle cx="75.6" cy="861.8" r="2.9" fill="#333333" stroke="#ececec" stroke-width="1.7"/><circle cx="104.3" cy="833.7" r="2.9" fill="#333333" stroke="#ececec" stroke-width="1.7"/><path d="M113.9 860.3V871.6999999999999H102.2Z" fill="#6a6a6a"/><rect x="72" y="893.8" width="35.8" height="27.9" rx="2.5" fill="#5b8fb8"/><path d="M74.5 909.5Q81 909 87 913Q95 917.5 105.4 909.5V917.5Q105.4 919.3 103.6 919.3H76.3Q74.5 919.3 74.5 917.5Z" fill="#234a66"/><circle cx="99.8" cy="901.5" r="3.5" fill="#e4e4e4"/><path d="M75.5 905.4Q78 901.5 81 902Q83.500 897 87.500 899Q91 900 90.5 903.400Q93 903.800 92.800 905.400Z" fill="#e4e4e4"/><path d="M80.3 951.8V978H105.9M74 957.4H99.8V983.8" fill="none" stroke="#e6e6e6" stroke-width="4"/><path d="M75.5 982.2L104.5 953.6" stroke="#9a9a9a" stroke-width="1.8"/><rect x="76" y="1014.2" width="28" height="27.6" fill="#252b2d" stroke="#e8e8e8" stroke-width="2"/><circle cx="89.9" cy="1087.8" r="14" fill="#252b2d" stroke="#e8e8e8" stroke-width="2"/><path d="M89.9 1132.5Q100.5 1147 100.5 1154A10.6 10.2 0 0 1 79.300 1154Q79.300 1147 89.900 1132.500Z" fill="#252b2d" stroke="#e8e8e8" stroke-width="1.9"/><path d="M113.9 1160V1171.4H102.2Z" fill="#6a6a6a"/><circle cx="85.4" cy="1203.7" r="8.2" fill="#3f8f96"/><rect x="88" y="1206" width="18.5" height="17.5" fill="#3f8f96"/><path d="M83.8 1202H100.3Q100.3 1218 83.8 1218Z" fill="#7af0a0" stroke="#333333" stroke-width="1.2"/><path d="M97 1196.500A12.600 12.600 0 1 0 80.500 1215.500" fill="none" stroke="#a6dcf4" stroke-width="1.8" stroke-dasharray="3 2.2"/><path d="M102 1203H107V1224.500H85.200V1219.500" fill="none" stroke="#a6dcf4" stroke-width="1.8" stroke-dasharray="3 2.2"/><rect x="74.8" y="1252.8" width="30.2" height="30.4" fill="none" stroke="#3d7ab0" stroke-width="1.8"/><circle cx="74.8" cy="1252.8" r="2.7" fill="#3d7ab0"/><circle cx="105" cy="1252.8" r="2.7" fill="#3d7ab0"/><circle cx="74.8" cy="1283.2" r="2.7" fill="#3d7ab0"/><circle cx="105" cy="1283.2" r="2.7" fill="#3d7ab0"/><text x="89.9" y="1277.3" font-family="Liberation Sans, sans-serif" font-size="26" fill="#cccccc" text-anchor="middle">A</text><path d="M113.9 1280.3V1291.7H102.2Z" fill="#6a6a6a"/><path d="M92.8 1326.5L76.8 1342.5" stroke="#b4b4b4" stroke-width="4.4" stroke-linecap="round"/><path d="M92 1325.5L76 1341.5" stroke="#e2e2e2" stroke-width="1.6" stroke-linecap="round"/><circle cx="100.2" cy="1317.5" r="7.3" fill="#b87858"/><path d="M89.500 1321.500L93 1318L101.500 1326.500L98 1330Z" fill="#b87858" stroke="#b87858" stroke-width="1.5" stroke-linejoin="round"/><path d="M113.9 1340.2V1351.6000000000001H102.2Z" fill="#6a6a6a"/><g transform="translate(90 1384.4) rotate(-42)"><rect x="-19.5" y="-5.2" width="39" height="10.4" rx="2" fill="#e2c455"/><path d="M-19.5 1.6H19.5V3.2Q19.5 5.2 17.5 5.2H-17.5Q-19.5 5.2 -19.5 3.200Z" fill="#c8a63c"/><rect x="-13" y="-3.8" width="1.8" height="5" rx="0.8" fill="#2a2410" transform="translate(0 -1.8)"/><rect x="-8" y="-2.4" width="1.8" height="3.6" rx="0.8" fill="#2a2410" transform="translate(0 -1.8)"/><rect x="-3" y="-3.8" width="1.8" height="5" rx="0.8" fill="#2a2410" transform="translate(0 -1.8)"/><rect x="2" y="-2.4" width="1.8" height="3.6" rx="0.8" fill="#2a2410" transform="translate(0 -1.8)"/><rect x="7" y="-3.8" width="1.8" height="5" rx="0.8" fill="#2a2410" transform="translate(0 -1.8)"/><rect x="12" y="-2.4" width="1.8" height="3.6" rx="0.8" fill="#2a2410" transform="translate(0 -1.8)"/></g><path d="M113.9 1400V1411.4H102.2Z" fill="#6a6a6a"/><rect x="61.8" y="1431.6" width="58.2" height="1.6" fill="#5a5a5a"/><g transform="translate(78.800 1489) rotate(45)"><rect x="-3.600" y="-7.500" width="7.200" height="14" rx="1.200" fill="#c8a070" stroke="#2a2a2a" stroke-width="0.800"/><rect x="-3.600" y="-7.500" width="2.400" height="14" fill="#e0c090"/></g><circle cx="93.700" cy="1473.900" r="13.400" fill="#d8d8d8" stroke="#2a2a2a" stroke-width="1"/><circle cx="93.700" cy="1473.900" r="9.200" fill="#a8d8f8" stroke="#2a2a2a" stroke-width="1.200"/><path d="M87.500 1477.500L98.500 1467.500A8 8 0 0 0 87.500 1477.500Z" fill="#d8eefc"/><path d="M113.9 1490.8V1502.2H102.2Z" fill="#6a6a6a"/><defs><radialGradient id="wg" cx="0.5" cy="0.35" r="0.62"><stop offset="0.72" stop-color="#ffffff"/><stop offset="1" stop-color="#dcdcdc"/></radialGradient><linearGradient id="wh" x1="0" y1="0" x2="0" y2="1"><stop offset="0" stop-color="#2c2c2c"/><stop offset="1" stop-color="#4a4a4a"/></linearGradient></defs><circle cx="91.100" cy="1552.100" r="30.200" fill="none" stroke="#505050" stroke-width="1.600"/><circle cx="91.100" cy="1577" r="30.200" fill="none" stroke="#505050" stroke-width="1.600"/><circle cx="91.100" cy="1577" r="29" fill="#1e1e1e"/><circle cx="91.100" cy="1577" r="27.800" fill="url(#wg)"/><path d="M72.500 1596L86.500 1581" stroke="#e8332c" stroke-width="1.300"/><circle cx="91.100" cy="1552.100" r="21.900" fill="none" stroke="#1e1e1e" stroke-width="14.200"/><circle cx="91.100" cy="1552.100" r="21.900" fill="none" stroke="#6b4744" stroke-width="11.600"/><clipPath id="wc"><circle cx="91.100" cy="1552.100" r="14.900"/></clipPath><circle cx="91.100" cy="1552.100" r="14.900" fill="url(#wh)"/><circle cx="91.100" cy="1577" r="27.800" fill="url(#wg)" clip-path="url(#wc)"/><path d="M78.500 1613Q91.100 1629 103.700 1613" fill="none" stroke="#7c7c7c" stroke-width="1.900"/><path d="M75.500 1616.500L78 1611.500L83 1614.500M106.700 1616.500L104.200 1611.500L99.200 1614.500" fill="none" stroke="#7c7c7c" stroke-width="1.900"/></svg>
<div style="left:2240px;top:208px;width:529px;height:56px;background:#1e1e1e;"></div>
<div style="left:2470.3px;top:208px;width:87.39999999999964px;height:56px;background:#383838;"></div>
<div style="left:2350.7px;top:208px;width:2px;height:56px;background:#343434;"></div>
<div style="left:2254.3px;top:228px;width:1.6px;height:16px;background:#6a6a6a;"></div>
<div style="left:2260.2px;top:228px;width:1.6px;height:16px;background:#6a6a6a;"></div>
<div style="left:2732px;top:224.8px;width:20px;height:3.4px;background:#b4b4b4;"></div>
<div style="left:2732px;top:232.8px;width:20px;height:3.4px;background:#b4b4b4;"></div>
<div style="left:2732px;top:240.8px;width:20px;height:3.4px;background:#b4b4b4;"></div>
<span style="left:2288.5px;top:223.8px;font-size:22px;color:#a6a6a6;letter-spacing:-0.52px;">Color</span>
<span style="left:2364.5px;top:223.8px;font-size:22px;color:#a6a6a6;letter-spacing:-0.58px;">Swatches</span>
<span style="left:2482.5px;top:223.8px;font-size:22px;color:#f2f2f2;font-weight:bold;-webkit-text-stroke:0;letter-spacing:-1.59px;">Stroke</span>
<span style="left:2570.5px;top:223.8px;font-size:22px;color:#a6a6a6;letter-spacing:-0.57px;">Appearance</span>
<span style="left:2256.6px;top:286.2px;font-size:22px;color:#c2c2c2;letter-spacing:-0.40px;">Style:</span>
<div style="left:2324px;top:275px;width:214px;height:40px;background:#474747;border-radius:6px;overflow:hidden;"><div style="left:52px;top:0;width:2px;height:40px;background:#363636"></div><div style="left:106px;top:0;width:2px;height:40px;background:#363636"></div><div style="left:160px;top:0;width:2px;height:40px;background:#363636"></div><div style="left:54px;top:0;width:52px;height:40px;background:#1e1e1e"></div></div>
<div style="left:2240px;top:322px;width:529px;height:2px;background:#2b2b2b;"></div>
<span style="left:2256.6px;top:345.2px;font-size:22px;color:#c2c2c2;letter-spacing:-0.23px;">Width:</span>
<div style="left:2322.3px;top:347.2px;width:312.4px;height:15.8px;background:#1f1f1f;border-radius:8px;"></div>
<div style="left:2326px;top:351px;width:42px;height:8px;background:#5b7db1;border-radius:4px 0 0 4px;"></div>
<div style="left:2357.6px;top:345.6px;width:18.8px;height:18.8px;background:#dcdcdc;border-radius:10px;box-shadow:0 0 0 1.2px #1b1b1b;"></div>
<div style="left:2647px;top:337px;width:100px;height:37.7px;background:#1e1e1e;border-radius:5px;"></div>
<span style="left:2652.6px;top:344.8px;font-size:22px;color:#e6e6e6;letter-spacing:-0.05px;">0.6 pt</span>
<span style="left:2256.6px;top:398.2px;font-size:22px;color:#c2c2c2;letter-spacing:-1.22px;">Cap:</span>
<div style="left:2324px;top:387px;width:160px;height:40px;background:#474747;border-radius:6px;overflow:hidden;"><div style="left:52px;top:0;width:2px;height:40px;background:#363636"></div><div style="left:106px;top:0;width:2px;height:40px;background:#363636"></div><div style="left:108px;top:0;width:52px;height:40px;background:#1e1e1e"></div></div>
<span style="left:2256.6px;top:448.2px;font-size:22px;color:#c2c2c2;letter-spacing:-0.37px;">Join:</span>
<div style="left:2324px;top:437px;width:160px;height:40px;background:#474747;border-radius:6px;overflow:hidden;"><div style="left:52px;top:0;width:2px;height:40px;background:#363636"></div><div style="left:106px;top:0;width:2px;height:40px;background:#363636"></div><div style="left:108px;top:0;width:52px;height:40px;background:#1e1e1e"></div></div>
<span style="left:2577.4px;top:448.2px;font-size:22px;color:#c2c2c2;letter-spacing:-0.14px;">Miter:</span>
<div style="left:2647px;top:439px;width:100px;height:37.7px;background:#1e1e1e;border-radius:5px;"></div>
<span style="left:2652.6px;top:447.2px;font-size:22px;color:#e6e6e6;">2</span>
<span style="left:2256.6px;top:500.2px;font-size:22px;color:#c2c2c2;letter-spacing:-0.41px;">Align:</span>
<div style="left:2324px;top:489px;width:160px;height:40px;background:#474747;border-radius:6px;overflow:hidden;"><div style="left:52px;top:0;width:2px;height:40px;background:#363636"></div><div style="left:106px;top:0;width:2px;height:40px;background:#363636"></div><div style="left:0px;top:0;width:52px;height:40px;background:#1e1e1e"></div></div>
<div style="left:2258px;top:541.6px;width:490px;height:1.8px;background:#2b2b2b;"></div>
<span style="left:2256.6px;top:572.2px;font-size:22px;color:#c2c2c2;letter-spacing:-0.43px;">Order:</span>
<div style="left:2324px;top:561px;width:106px;height:40px;background:#474747;border-radius:6px;overflow:hidden;"><div style="left:52px;top:0;width:2px;height:40px;background:#363636"></div><div style="left:54px;top:0;width:52px;height:40px;background:#1e1e1e"></div></div>
<div style="left:2531px;top:563px;width:24px;height:23.8px;background:#1e1e1e;border-radius:5px;"></div>
<span style="left:2562.6px;top:565.2px;font-size:22px;color:#c2c2c2;letter-spacing:-0.11px;">Scale with object</span>
<div style="left:2258px;top:614.2px;width:490px;height:1.8px;background:#2b2b2b;"></div>
<span style="left:2258.6px;top:645.2px;font-size:22px;color:#c2c2c2;letter-spacing:-0.22px;">Start:</span>
<div style="left:2321px;top:633.3px;width:111.8px;height:45.4px;background:#474747;border-radius:6px;"></div>
<div style="left:2352px;top:654.4px;width:47.8px;height:2.8px;background:#ececec;"></div>
<div style="left:2443px;top:637px;width:115.8px;height:37.6px;background:#2e2e2e;border-radius:5px;"></div>
<div style="left:2533.2px;top:637px;width:1.6px;height:37.6px;background:#363636;"></div>
<span style="left:2448.6px;top:644.8px;font-size:22px;color:#8a8a8a;letter-spacing:-1.24px;">100 %</span>
<span style="left:2258.6px;top:705.5px;font-size:22px;color:#c2c2c2;letter-spacing:-1.49px;">End:</span>
<div style="left:2321px;top:691.4px;width:111.8px;height:45.2px;background:#474747;border-radius:6px;"></div>
<div style="left:2336px;top:712.4px;width:47.8px;height:2.8px;background:#ececec;"></div>
<div style="left:2443px;top:695.2px;width:115.8px;height:37.6px;background:#2e2e2e;border-radius:5px;"></div>
<div style="left:2533.2px;top:695.2px;width:1.6px;height:37.6px;background:#363636;"></div>
<span style="left:2448.6px;top:703.0px;font-size:22px;color:#8a8a8a;letter-spacing:-1.24px;">100 %</span>
<div style="left:2637px;top:635px;width:106px;height:40px;background:#474747;border-radius:6px;overflow:hidden;"><div style="left:52px;top:0;width:2px;height:40px;background:#363636"></div><div style="left:0px;top:0;width:52px;height:40px;background:#1e1e1e"></div></div>
<div style="left:2637px;top:697px;width:52px;height:39.6px;background:#444444;border-radius:6px;"></div>
<div style="left:2691px;top:697px;width:52px;height:39.6px;background:#444444;border-radius:6px;"></div>
<div style="left:2258px;top:759.8px;width:490px;height:1.8px;background:#2b2b2b;"></div>
<div style="left:2261px;top:793.4px;width:197.8px;height:33.2px;background:#474747;border-radius:5px;"></div>
<span style="left:2300.7px;top:797.8px;font-size:22px;color:#dcdcdc;letter-spacing:-0.22px;">Properties...</span>
<span style="left:2533.3px;top:797.8px;font-size:22px;color:#c2c2c2;letter-spacing:-0.68px;">Pressure:</span>
<div style="left:2629px;top:789.3px;width:118px;height:35.8px;background:#444444;border-radius:4px;"></div>
<div style="left:2634.7px;top:795px;width:106.4px;height:24px;background:#5a5a5a;"></div>
<div style="left:2634.7px;top:795px;width:106.4px;height:1.2px;background:#b0b0b0;"></div>
<div style="left:2240px;top:858px;width:529px;height:4px;background:#0e0e0e;"></div>
<div style="left:2240px;top:862px;width:529px;height:56px;background:#1e1e1e;"></div>
<div style="left:2276px;top:862px;width:88px;height:56px;background:#383838;"></div>
<div style="left:2466.7px;top:862px;width:2px;height:56px;background:#343434;"></div>
<div style="left:2579px;top:862px;width:2px;height:56px;background:#343434;"></div>
<div style="left:2254.3px;top:882px;width:1.6px;height:16px;background:#6a6a6a;"></div>
<div style="left:2260.2px;top:882px;width:1.6px;height:16px;background:#6a6a6a;"></div>
<div style="left:2732px;top:878.8px;width:20px;height:3.4px;background:#b4b4b4;"></div>
<div style="left:2732px;top:886.8px;width:20px;height:3.4px;background:#b4b4b4;"></div>
<div style="left:2732px;top:894.8px;width:20px;height:3.4px;background:#b4b4b4;"></div>
<span style="left:2288.5px;top:878.2px;font-size:22px;color:#f2f2f2;font-weight:bold;-webkit-text-stroke:0;letter-spacing:-1.89px;">Layers</span>
<span style="left:2376.4px;top:878.2px;font-size:22px;color:#a6a6a6;letter-spacing:-0.57px;">Brushes</span>
<span style="left:2480.5px;top:878.2px;font-size:22px;color:#a6a6a6;letter-spacing:-0.78px;">Quick FX</span>
<span style="left:2592.7px;top:878.2px;font-size:22px;color:#a6a6a6;letter-spacing:-0.42px;">Styles</span>
<span style="left:2250.5px;top:941.8px;font-size:22px;color:#c2c2c2;letter-spacing:-0.24px;">Opacity:</span>
<div style="left:2337px;top:931.6px;width:111.6px;height:40.8px;background:#2e2e2e;border-radius:5px;"></div>
<div style="left:2423px;top:931.6px;width:1.6px;height:40.8px;background:#363636;"></div>
<span style="left:2342.8px;top:940.9px;font-size:22px;color:#8a8a8a;letter-spacing:-1.24px;">100 %</span>
<div style="left:2455px;top:931px;width:218px;height:39.4px;background:#3d3d3d;border-radius:5px;"></div>
<span style="left:2465.0px;top:940.2px;font-size:22px;color:#9a9a9a;letter-spacing:-0.48px;">Normal</span>
<div style="left:2240px;top:982px;width:529px;height:346px;background:#1f1f1f;"></div>
<div style="left:2240px;top:982px;width:529px;height:346px;overflow:hidden;">
<div style="left:0px;top:4px;width:32px;height:72px;background:#353535;"></div>
<div style="left:34px;top:4px;width:72px;height:72px;background:#3a3a3a;"></div>
<div style="left:108px;top:4px;width:418px;height:72px;background:#353535;"></div>
<div style="left:38px;top:8px;width:64px;height:64px;background:#262626;"></div>
<div style="left:0px;top:78px;width:32px;height:72px;background:#353535;"></div>
<div style="left:34px;top:78px;width:72px;height:72px;background:#3a3a3a;"></div>
<div style="left:108px;top:78px;width:418px;height:72px;background:#353535;"></div>
<div style="left:38px;top:82px;width:64px;height:64px;background:#262626;"></div>
<div style="left:0px;top:152px;width:32px;height:72px;background:#353535;"></div>
<div style="left:34px;top:152px;width:72px;height:72px;background:#3a3a3a;"></div>
<div style="left:108px;top:152px;width:418px;height:72px;background:#353535;"></div>
<div style="left:38px;top:156px;width:64px;height:64px;background:#262626;"></div>
<div style="left:0px;top:226px;width:32px;height:72px;background:#353535;"></div>
<div style="left:34px;top:226px;width:72px;height:72px;background:#3a3a3a;"></div>
<div style="left:108px;top:226px;width:418px;height:72px;background:#353535;"></div>
<div style="left:38px;top:230px;width:64px;height:64px;background:#262626;"></div>
<div style="left:0px;top:300px;width:32px;height:72px;background:#353535;"></div>
<div style="left:34px;top:300px;width:72px;height:72px;background:#3a3a3a;"></div>
<div style="left:108px;top:300px;width:418px;height:72px;background:#353535;"></div>
<div style="left:38px;top:304px;width:64px;height:64px;background:#262626;"></div>
</div>
<span style="left:2368.3px;top:1012.0px;font-size:22px;color:#858585;letter-spacing:-0.80px;">Curves</span>
<span style="left:2368.3px;top:1086.0px;font-size:22px;color:#858585;letter-spacing:-0.77px;">Curve</span>
<span style="left:2368.3px;top:1160.0px;font-size:22px;color:#858585;letter-spacing:-0.77px;">Curve</span>
<span style="left:2368.3px;top:1234.0px;font-size:22px;color:#858585;letter-spacing:-0.77px;">Curve</span>
<span style="left:2368.3px;top:1308.0px;font-size:22px;color:#858585;letter-spacing:-0.77px;">Curve</span>
<div style="left:2240px;top:1328px;width:529px;height:68px;background:#363636;"></div>
<div style="left:2249px;top:1342px;width:42px;height:40px;background:#1e1e1e;border-radius:8px;"></div>
<div style="left:2240px;top:1396px;width:529px;height:4px;background:#0e0e0e;"></div>
<div style="left:2240px;top:1400px;width:529px;height:56px;background:#1e1e1e;"></div>
<div style="left:2276px;top:1400px;width:122px;height:56px;background:#383838;"></div>
<div style="left:2514.7px;top:1400px;width:2px;height:56px;background:#343434;"></div>
<div style="left:2254.3px;top:1420px;width:1.6px;height:16px;background:#6a6a6a;"></div>
<div style="left:2260.2px;top:1420px;width:1.6px;height:16px;background:#6a6a6a;"></div>
<div style="left:2732px;top:1416.8px;width:20px;height:3.4px;background:#b4b4b4;"></div>
<div style="left:2732px;top:1424.8px;width:20px;height:3.4px;background:#b4b4b4;"></div>
<div style="left:2732px;top:1432.8px;width:20px;height:3.4px;background:#b4b4b4;"></div>
<span style="left:2288.5px;top:1415.9px;font-size:22px;color:#f2f2f2;font-weight:bold;-webkit-text-stroke:0;letter-spacing:-1.46px;">Transform</span>
<span style="left:2410.4px;top:1415.9px;font-size:22px;color:#a6a6a6;letter-spacing:-0.32px;">Navigator</span>
<span style="left:2528.4px;top:1415.9px;font-size:22px;color:#a6a6a6;letter-spacing:-0.14px;">History</span>
<div style="left:2279.8px;top:1511.8px;width:66.2px;height:66.2px;background:#6c6c6c;"></div>
<div style="left:2274.7px;top:1506.7px;width:11px;height:11px;background:#545454;"></div>
<div style="left:2274.7px;top:1539.4px;width:11px;height:11px;background:#545454;"></div>
<div style="left:2274.7px;top:1572px;width:11px;height:11px;background:#545454;"></div>
<div style="left:2307.4px;top:1506.7px;width:11px;height:11px;background:#545454;"></div>
<div style="left:2307.4px;top:1539.4px;width:11px;height:11px;background:#545454;"></div>
<div style="left:2307.4px;top:1572px;width:11px;height:11px;background:#545454;"></div>
<div style="left:2340px;top:1506.7px;width:11px;height:11px;background:#545454;"></div>
<div style="left:2340px;top:1539.4px;width:11px;height:11px;background:#545454;"></div>
<div style="left:2340px;top:1572px;width:11px;height:11px;background:#545454;"></div>
<div style="left:2427px;top:1483px;width:118px;height:37.6px;background:#2e2e2e;border-radius:5px;"></div>
<div style="left:2603px;top:1483px;width:118px;height:37.6px;background:#2e2e2e;border-radius:5px;"></div>
<div style="left:2427px;top:1527px;width:118px;height:37.6px;background:#2e2e2e;border-radius:5px;"></div>
<div style="left:2603px;top:1527px;width:118px;height:37.6px;background:#2e2e2e;border-radius:5px;"></div>
<div style="left:2427px;top:1579px;width:118px;height:37.6px;background:#2e2e2e;border-radius:5px;"></div>
<div style="left:2603px;top:1579px;width:118px;height:37.6px;background:#2e2e2e;border-radius:5px;"></div>
<div style="left:2519px;top:1579px;width:1.6px;height:37.6px;background:#363636;"></div>
<div style="left:2695.4px;top:1579px;width:1.6px;height:37.6px;background:#363636;"></div>
<span style="left:2398.9px;top:1493.2px;font-size:19px;color:#c2c2c2;">X:</span>
<span style="left:2432.5px;top:1490.7px;font-size:22px;color:#8a8a8a;letter-spacing:-0.59px;">0 px</span>
<span style="left:2569.7px;top:1493.2px;font-size:19px;color:#c2c2c2;">W:</span>
<span style="left:2608.4px;top:1490.7px;font-size:22px;color:#8a8a8a;letter-spacing:-0.59px;">0 px</span>
<span style="left:2399.5px;top:1537.3px;font-size:19px;color:#c2c2c2;">Y:</span>
<span style="left:2432.5px;top:1534.5px;font-size:22px;color:#8a8a8a;letter-spacing:-0.59px;">0 px</span>
<span style="left:2573.0px;top:1535.2px;font-size:19px;color:#c2c2c2;">H:</span>
<span style="left:2608.4px;top:1534.5px;font-size:22px;color:#8a8a8a;letter-spacing:-0.59px;">0 px</span>
<span style="left:2398.9px;top:1590.7px;font-size:19px;color:#c2c2c2;">R:</span>
<span style="left:2432.5px;top:1586.8px;font-size:22px;color:#8a8a8a;letter-spacing:-0.07px;">0 °</span>
<span style="left:2574.8px;top:1590.7px;font-size:19px;color:#c2c2c2;">S:</span>
<span style="left:2608.4px;top:1586.8px;font-size:22px;color:#8a8a8a;letter-spacing:-0.07px;">0 °</span>
<div style="left:2643px;top:1631.4px;width:51.8px;height:38.2px;background:#444444;border-radius:6px;"></div>
<div style="left:2697px;top:1631.4px;width:24px;height:38.2px;background:#444444;border-radius:6px;"></div>
<svg style="left:0px;top:0px;" width="2814" height="1792" viewBox="0 0 2814 1792"><circle cx="2349.9" cy="294.9" r="13.4" fill="none" stroke="#e0e0e0" stroke-width="1.8"/><path d="M2345 290L2354.800 299.800M2354.800 290L2345 299.800" fill="none" stroke="#e0e0e0" stroke-width="1.8" /><path d="M2393.600 305L2414.500 284.800" fill="none" stroke="#e0e0e0" stroke-width="2.8" stroke-linecap="round"/><path d="M2447 306L2469 284" fill="none" stroke="#e0e0e0" stroke-width="3.4" stroke-dasharray="5 5.400" stroke-dashoffset="-0.6"/><path d="M2521.300 282.200Q2518.500 281.200 2513 288Q2508 294.500 2508.500 296Q2509.500 298.500 2511.500 298.500Q2515 295.500 2518.500 290Q2522.300 284 2521.300 282.200Z" fill="#e0e0e0"/><path d="M2507.300 297.200Q2503.500 297 2502.500 301Q2501.800 305 2498.500 306.600Q2505 307.800 2508.500 304.500Q2511 301.500 2509.800 299.300Z" fill="#e0e0e0"/><path d="M2333.800 395H2355A11 10.950 0 0 1 2355 416.900H2333.800Z" fill="#e0e0e0"/><rect x="2333.800" y="405.200" width="18" height="1.700" fill="#474747"/><rect x="2350.100" y="403" width="6" height="6.200" fill="#474747"/><rect x="2388" y="395" width="26.200" height="21.900" fill="#e0e0e0"/><rect x="2412.800" y="401.300" width="6.600" height="9.200" fill="#474747" stroke="#e0e0e0" stroke-width="1.600"/><rect x="2388" y="405.200" width="26" height="1.700" fill="#474747"/><rect x="2412.400" y="403" width="6" height="6.200" fill="#474747"/><rect x="2441.800" y="395" width="32.300" height="21.900" fill="#e0e0e0"/><rect x="2441.800" y="405.200" width="20" height="1.700" fill="#1e1e1e"/><rect x="2460" y="403" width="6.200" height="6.200" fill="#1e1e1e"/><path d="M2342.300 443H2352.200V454.700H2364V465H2358Q2342.300 463 2342.300 447Z" fill="#9a9a9a"/><path d="M2338.200 443V447Q2339 468 2360 469.300H2364" fill="none" stroke="#e0e0e0" stroke-width="3.8" /><path d="M2396.300 443H2406.200V454.700H2418V465H2409L2396.300 452Z" fill="#9a9a9a"/><path d="M2392.200 443V454L2407.300 469.300H2418" fill="none" stroke="#e0e0e0" stroke-width="3.8" /><path d="M2450.300 443H2460V454.700H2472V465H2450.300Z" fill="#9a9a9a"/><path d="M2446 443V469.200H2472" fill="none" stroke="#e0e0e0" stroke-width="4" /><path d="M2337.800 497.200H2364V511H2352.300V523H2337.800Z" fill="#e0e0e0"/><path d="M2345 523V504.200H2364" fill="none" stroke="#1e1e1e" stroke-width="1.7" /><rect x="2342" y="501" width="6.200" height="6.200" fill="#1e1e1e"/><path d="M2396.200 501H2418V511H2406.200V523H2396.200Z" fill="#e0e0e0"/><path d="M2393.200 523V497.300H2418" fill="none" stroke="#e0e0e0" stroke-width="1.7" /><rect x="2390.200" y="495" width="7.800" height="8" fill="#474747" stroke="#e0e0e0" stroke-width="1.500"/><path d="M2446 497.200H2472V509H2458.300V523H2446Z" fill="#e0e0e0"/><path d="M2458 523V512.500H2472" fill="none" stroke="#e0e0e0" stroke-width="1.7" /><path d="M2456 523V510.300H2472" fill="none" stroke="#474747" stroke-width="1.4" /><rect x="2454" y="505" width="6.200" height="6.200" fill="#474747"/><rect x="2340" y="571" width="14" height="14" rx="2" fill="none" stroke="#e0e0e0" stroke-width="3.600"/><rect x="2345" y="575.600" width="18.200" height="18.600" rx="3" fill="#9a9a9a" stroke="#474747" stroke-width="2.200"/><rect x="2399.800" y="576.800" width="16.200" height="16.200" rx="3" fill="#9a9a9a"/><rect x="2394" y="571" width="14" height="14" rx="2" fill="#1e1e1e" stroke="#e0e0e0" stroke-width="3.600"/><rect x="2399.800" y="576.800" width="4.200" height="4.200" fill="#9a9a9a"/><path d="M2413.2999999999997 652.9079999999999L2416.7 648.692L2420.1 652.9079999999999" fill="none" stroke="#b8b8b8" stroke-width="1.4" /><path d="M2413.2999999999997 659.0920000000001L2416.7 663.308L2420.1 659.0920000000001" fill="none" stroke="#b8b8b8" stroke-width="1.4" /><path d="M2413.2999999999997 710.7079999999999L2416.7 706.492L2420.1 710.7079999999999" fill="none" stroke="#b8b8b8" stroke-width="1.4" /><path d="M2413.2999999999997 716.892L2416.7 721.108L2420.1 716.892" fill="none" stroke="#b8b8b8" stroke-width="1.4" /><path d="M2543.2000000000003 654.268L2546.8 658.732L2550.4 654.268" fill="none" stroke="#8a8a8a" stroke-width="1.4" /><path d="M2543.2000000000003 712.268L2546.8 716.732L2550.4 712.268" fill="none" stroke="#8a8a8a" stroke-width="1.4" /><path d="M2567.800 661.300H2580V669.500M2580 676V692M2580 698.500V707H2567.800" fill="none" stroke="#e0e0e0" stroke-width="1.6" /><rect x="2575" y="667.400" width="10" height="14" rx="4.600" fill="none" stroke="#e0e0e0" stroke-width="1.600"/><rect x="2575" y="686.600" width="10" height="14.400" rx="4.600" fill="none" stroke="#e0e0e0" stroke-width="1.600"/><path d="M2651 655H2666" fill="none" stroke="#e0e0e0" stroke-width="3.6" /><path d="M2661 647.500L2673 655L2661 662.500Z" fill="#e0e0e0" stroke="#e0e0e0" stroke-width="1.400" stroke-linejoin="round"/><path d="M2674 642.800V669" fill="none" stroke="#e0e0e0" stroke-width="2.2" /><path d="M2705 655H2722" fill="none" stroke="#e0e0e0" stroke-width="3.6" /><path d="M2719.500 647.500L2730.500 655L2719.500 662.500Z" fill="#e0e0e0" stroke="#e0e0e0" stroke-width="1.400" stroke-linejoin="round"/><path d="M2716 643V651M2716 659.500V667" fill="none" stroke="#e0e0e0" stroke-width="2.2" /><path d="M2654 708H2668A5.500 5.500 0 0 1 2668 719H2663.500A2.500 2.500 0 0 1 2663.500 714H2666.500" fill="none" stroke="#e0e0e0" stroke-width="1.9" /><path d="M2672 726H2658A5.500 5.500 0 0 1 2658 715H2662" fill="none" stroke="#e0e0e0" stroke-width="1.9" /><path d="M2651.200 708L2656.500 704V712ZM2674.800 726L2669.500 722V730Z" fill="#e0e0e0"/><path d="M2706 713A12.500 12.500 0 0 1 2728 710.500M2728.500 721A12.500 12.500 0 0 1 2706.500 723.500" fill="none" stroke="#e0e0e0" stroke-width="1.8" /><path d="M2712.500 712.500L2721.500 721.500M2721.500 712.500L2712.500 721.500" fill="none" stroke="#e0e0e0" stroke-width="1.9" /><path d="M2701.300 713.500L2708.800 713L2705 719.500ZM2733.200 720.500L2725.500 721L2729.500 714.500Z" fill="#e0e0e0"/><path d="M2432.2000000000003 950.268L2435.8 954.732L2439.4 950.268" fill="none" stroke="#8a8a8a" stroke-width="1.4" /><path d="M2652.2000000000003 947.232L2655.8 942.768L2659.4 947.232" fill="none" stroke="#8a8a8a" stroke-width="1.3" /><path d="M2652.2000000000003 954.768L2655.8 959.232L2659.4 954.768" fill="none" stroke="#8a8a8a" stroke-width="1.3" /><path d="M2707.5 947.5 L2711.0 947.7 L2711.0 952.3 L2707.5 952.5 L2706.9 953.9 L2709.3 956.4 L2706.0 959.7 L2703.5 957.3 L2702.1 957.9 L2701.9 961.4 L2697.3 961.4 L2697.1 957.9 L2695.7 957.3 L2693.2 959.7 L2689.9 956.4 L2692.3 953.9 L2691.7 952.5 L2688.2 952.3 L2688.2 947.7 L2691.7 947.5 L2692.3 946.1 L2689.9 943.6 L2693.2 940.3 L2695.7 942.7 L2697.1 942.1 L2697.3 938.6 L2701.9 938.6 L2702.1 942.1 L2703.5 942.7 L2706.0 940.3 L2709.3 943.6 L2706.9 946.1Z M2695.7999999999997 950a3.800 3.800 0 1 0 7.600 0a3.800 3.800 0 1 0 -7.600 0Z" fill="#c4c4c4" fill-rule="evenodd" stroke="#c4c4c4" stroke-width="1" stroke-linejoin="round"/><rect x="2730.600" y="948.800" width="16.400" height="13" rx="1.500" fill="#a8a8a8"/><path d="M2734.300 948.800V942.500A4.600 4.600 0 0 1 2743.500 942.500V944.500" fill="none" stroke="#a8a8a8" stroke-width="1.7" /><g clip-path="url(#lc)"><path d="M2251 1011.8V1031.8" fill="none" stroke="#a4a4a4" stroke-width="1.8" /><circle cx="2251" cy="1011.4" r="2.100" fill="#a4a4a4"/><circle cx="2251" cy="1032.2" r="2.100" fill="#a4a4a4"/><circle cx="2251" cy="1021.8" r="3.100" fill="#353535" stroke="#a4a4a4" stroke-width="1.500"/><path d="M2262 1012.4A10.200 10.200 0 0 0 2262 1031.2" fill="none" stroke="#a4a4a4" stroke-width="1.9" /><circle cx="2724.800" cy="1020.8" r="8.100" fill="#4b4b4b"/></g><g clip-path="url(#lc)"><path d="M2251 1085.8V1105.8" fill="none" stroke="#a4a4a4" stroke-width="1.8" /><circle cx="2251" cy="1085.3999999999999" r="2.100" fill="#a4a4a4"/><circle cx="2251" cy="1106.2" r="2.100" fill="#a4a4a4"/><circle cx="2251" cy="1095.8" r="3.100" fill="#353535" stroke="#a4a4a4" stroke-width="1.500"/><path d="M2262 1086.3999999999999A10.200 10.200 0 0 0 2262 1105.2" fill="none" stroke="#a4a4a4" stroke-width="1.9" /><circle cx="2724.800" cy="1094.8" r="8.100" fill="#a0a0a0"/><path d="M2653.9 1083.9L2666.4 1083.9L2666.4 1088.1L2653.9 1088.1ZM2653.9 1092.0L2661.9 1092.0L2661.9 1095.9L2658.0 1095.9L2658.0 1107.9L2653.9 1107.9ZM2663.2 1083.9L2667.7 1083.9L2677.9 1107.9L2673.4 1107.9ZM2673.1 1083.9L2677.3 1083.9L2665.5 1107.9L2660.9 1107.9Z" fill="#a3a3a3"/></g><g clip-path="url(#lc)"><path d="M2251 1159.8V1179.8" fill="none" stroke="#a4a4a4" stroke-width="1.8" /><circle cx="2251" cy="1159.3999999999999" r="2.100" fill="#a4a4a4"/><circle cx="2251" cy="1180.2" r="2.100" fill="#a4a4a4"/><circle cx="2251" cy="1169.8" r="3.100" fill="#353535" stroke="#a4a4a4" stroke-width="1.500"/><path d="M2262 1160.3999999999999A10.200 10.200 0 0 0 2262 1179.2" fill="none" stroke="#a4a4a4" stroke-width="1.9" /><circle cx="2724.800" cy="1168.8" r="8.100" fill="#a0a0a0"/><path d="M2653.9 1157.9L2666.4 1157.9L2666.4 1162.1L2653.9 1162.1ZM2653.9 1166.0L2661.9 1166.0L2661.9 1169.9L2658.0 1169.9L2658.0 1181.9L2653.9 1181.9ZM2663.2 1157.9L2667.7 1157.9L2677.9 1181.9L2673.4 1181.9ZM2673.1 1157.9L2677.3 1157.9L2665.5 1181.9L2660.9 1181.9Z" fill="#a3a3a3"/></g><g clip-path="url(#lc)"><path d="M2251 1233.8V1253.8" fill="none" stroke="#a4a4a4" stroke-width="1.8" /><circle cx="2251" cy="1233.3999999999999" r="2.100" fill="#a4a4a4"/><circle cx="2251" cy="1254.2" r="2.100" fill="#a4a4a4"/><circle cx="2251" cy="1243.8" r="3.100" fill="#353535" stroke="#a4a4a4" stroke-width="1.500"/><path d="M2262 1234.3999999999999A10.200 10.200 0 0 0 2262 1253.2" fill="none" stroke="#a4a4a4" stroke-width="1.9" /><circle cx="2724.800" cy="1242.8" r="8.100" fill="#4b4b4b"/><path d="M2653.9 1231.9L2666.4 1231.9L2666.4 1236.1L2653.9 1236.1ZM2653.9 1240.0L2661.9 1240.0L2661.9 1243.9L2658.0 1243.9L2658.0 1255.9L2653.9 1255.9ZM2663.2 1231.9L2667.7 1231.9L2677.9 1255.9L2673.4 1255.9ZM2673.1 1231.9L2677.3 1231.9L2665.5 1255.9L2660.9 1255.9Z" fill="#a3a3a3"/></g><g clip-path="url(#lc)"><path d="M2251 1307.8V1327.8" fill="none" stroke="#a4a4a4" stroke-width="1.8" /><circle cx="2251" cy="1307.3999999999999" r="2.100" fill="#a4a4a4"/><circle cx="2251" cy="1328.2" r="2.100" fill="#a4a4a4"/><circle cx="2251" cy="1317.8" r="3.100" fill="#353535" stroke="#a4a4a4" stroke-width="1.500"/><path d="M2262 1308.3999999999999A10.200 10.200 0 0 0 2262 1327.2" fill="none" stroke="#a4a4a4" stroke-width="1.9" /><circle cx="2724.800" cy="1316.8" r="8.100" fill="#4b4b4b"/><path d="M2653.9 1305.9L2666.4 1305.9L2666.4 1310.1L2653.9 1310.1ZM2653.9 1314.0L2661.9 1314.0L2661.9 1317.9L2658.0 1317.9L2658.0 1329.9L2653.9 1329.9ZM2663.2 1305.9L2667.7 1305.9L2677.9 1329.9L2673.4 1329.9ZM2673.1 1305.9L2677.3 1305.9L2665.5 1329.9L2660.9 1329.9Z" fill="#a3a3a3"/></g><clipPath id="lc"><rect x="2240" y="982" width="529" height="346"/></clipPath><clipPath id="lc2"><rect x="2240" y="982" width="529" height="346"/></clipPath><g clip-path="url(#lc2)"><g transform="translate(2278 1022) scale(0.06226) translate(-672 -952)"><path d="M715.7,951.9 C715.7,840.9 779.3,757.8 880,757.8 C1020.0,757.8 1078.0,850.4 1186,951.9 C1299.4,1059.6 1368.2,1146.4 1493.2,1146.4 C1591.3,1146.4 1656.3,1066.9 1656.3,951.9" fill="none" stroke="#000" stroke-width="86.6"/><path d="M715.7,951.9 C715.7,1067.4 781.5,1146.6 882,1146.6 C1004.6,1146.6 1077.5,1056.1 1186,951.9 C1302.0,839.4 1373.4,758.3 1483.4,758.3 C1576.9,758.3 1656.3,837.7 1656.3,951.9" fill="none" stroke="#000" stroke-width="86.6"/></g><g transform="translate(2278 1096) scale(0.06226) translate(-672 -952)"><path d="M715.7,951.9 C715.7,840.9 779.3,757.8 880,757.8 C1020.0,757.8 1078.0,850.4 1186,951.9 C1299.4,1059.6 1368.2,1146.4 1493.2,1146.4 C1591.3,1146.4 1656.3,1066.9 1656.3,951.9" fill="none" stroke="url(#gA)" stroke-width="86.6"/></g><g transform="translate(2278 1170) scale(0.06226) translate(-672 -952)"><path d="M715.7,951.9 C715.7,1067.4 781.5,1146.6 882,1146.6 C1004.6,1146.6 1077.5,1056.1 1186,951.9 C1302.0,839.4 1373.4,758.3 1483.4,758.3 C1576.9,758.3 1656.3,837.7 1656.3,951.9" fill="none" stroke="url(#gB)" stroke-width="86.6"/></g><clipPath id="t4"><rect x="2278" y="1212" width="64" height="64"/></clipPath><clipPath id="t5"><rect x="2278" y="1286" width="64" height="64"/></clipPath><g clip-path="url(#t4)"><g transform="translate(2278 1244) scale(0.12480) translate(-672.4 -862)"><path d="M715.7,951.9 C715.7,840.9 779.3,757.8 880,757.8 C1020.0,757.8 1078.0,850.4 1186,951.9  l60,56" fill="none" stroke="url(#gA4)" stroke-width="86.6"/></g></g><g clip-path="url(#t5)"><g transform="translate(2342 1306.8) scale(0.12480) translate(-1699.6 -951.9)"><path d="M1126,895.9 L1186,951.9 C1299.4,1059.6 1368.2,1146.4 1493.2,1146.4 C1591.3,1146.4 1656.3,1066.9 1656.3,951.9" fill="none" stroke="url(#gA5)" stroke-width="86.6"/></g></g><defs><linearGradient id="gA4" gradientUnits="userSpaceOnUse" x1="672" y1="0" x2="1186" y2="0"><stop offset="0.0000" stop-color="#ffffff"/><stop offset="0.0625" stop-color="#fefefe"/><stop offset="0.1250" stop-color="#fafafd"/><stop offset="0.1875" stop-color="#f5f5fa"/><stop offset="0.2500" stop-color="#ededf7"/><stop offset="0.3125" stop-color="#e4e4f3"/><stop offset="0.3750" stop-color="#d9d8ee"/><stop offset="0.4375" stop-color="#cccce9"/><stop offset="0.5000" stop-color="#bdbde3"/><stop offset="0.5625" stop-color="#adadde"/><stop offset="0.6250" stop-color="#9c9bd8"/><stop offset="0.6875" stop-color="#8988d2"/><stop offset="0.7500" stop-color="#7473cd"/><stop offset="0.8125" stop-color="#5e5dc9"/><stop offset="0.8750" stop-color="#4746c5"/><stop offset="0.9375" stop-color="#3231c3"/><stop offset="1" stop-color="#2826c2"/></linearGradient><linearGradient id="gA5" gradientUnits="userSpaceOnUse" x1="1186" y1="0" x2="1700" y2="0"><stop offset="0.0000" stop-color="#2826c2"/><stop offset="0.0625" stop-color="#2926c1"/><stop offset="0.1250" stop-color="#2d26c0"/><stop offset="0.1875" stop-color="#3326be"/><stop offset="0.2500" stop-color="#3927bb"/><stop offset="0.3125" stop-color="#3f27b7"/><stop offset="0.3750" stop-color="#4527b3"/><stop offset="0.4375" stop-color="#4b28af"/><stop offset="0.5000" stop-color="#5128aa"/><stop offset="0.5625" stop-color="#5628a5"/><stop offset="0.6250" stop-color="#5b29a0"/><stop offset="0.6875" stop-color="#5f299b"/><stop offset="0.7500" stop-color="#632996"/><stop offset="0.8125" stop-color="#662a92"/><stop offset="0.8750" stop-color="#682a8f"/><stop offset="0.9375" stop-color="#6a2a8d"/><stop offset="1" stop-color="#6a2a8c"/></linearGradient></defs></g><rect x="2259.200" y="1351.300" width="13.600" height="13.300" rx="2.400" fill="#1e1e1e" stroke="#a4a4a4" stroke-width="1.700"/><path d="M2262.600 1368.500H2277.600V1354.700M2266.800 1372.500H2281.800V1358.700" fill="none" stroke="#a4a4a4" stroke-width="1.7" /><rect x="2404" y="1348" width="32" height="28" rx="2.500" fill="#a4a4a4"/><circle cx="2420" cy="1362" r="8" fill="#363636"/><circle cx="2465.900" cy="1361.800" r="15" fill="none" stroke="#a4a4a4" stroke-width="1.800"/><path d="M2458.400 1369.300A10.600 10.600 0 0 0 2473.400 1354.300Z" fill="#a4a4a4"/><g transform="translate(2496.300 1351.900) scale(1 0.84)"><path d="M0.0 0.0L12.5 0.0L12.5 4.2L0.0 4.2ZM0.0 8.1L8.0 8.1L8.0 12.0L4.1 12.0L4.1 24.0L0.0 24.0ZM9.3 0.0L13.8 0.0L24.0 24.0L19.5 24.0ZM19.2 0.0L23.4 0.0L11.6 24.0L7.0 24.0Z" fill="#a4a4a4"/></g><path d="M2496 1347H2520.500M2496 1376.700H2520.500" fill="none" stroke="#a4a4a4" stroke-width="1.8" /><path d="M2543.600 1347.200H2559.800Q2567.500 1362 2566.200 1376.800Q2551 1379.200 2536.400 1377.400Q2540.500 1368 2545 1360Q2546.400 1353.500 2543.600 1347.200Z" fill="none" stroke="#a4a4a4" stroke-width="1.8" stroke-linejoin="round"/><path d="M2549 1347.200Q2552.500 1362 2546 1377.900M2554.600 1347.200Q2560 1362 2556 1378.200" fill="none" stroke="#a4a4a4" stroke-width="1.6" /><path d="M2545.600 1354.600Q2554 1352.800 2563.600 1355M2544.200 1362.200Q2555 1360.300 2566 1362.800M2540.600 1369.800Q2553 1367.800 2566.600 1370.400" fill="none" stroke="#a4a4a4" stroke-width="1.6" /><path d="M2653.900 1347.400H2641.600Q2639.600 1347.400 2639.600 1349.400V1374.500Q2639.600 1376.500 2641.600 1376.500H2658.400Q2660.400 1376.500 2660.400 1374.500V1360.200" fill="none" stroke="#a4a4a4" stroke-width="2" /><path d="M2655.900 1351H2666M2661 1346V1356" fill="none" stroke="#a4a4a4" stroke-width="1.8" /><rect x="2644.100" y="1356" width="11.800" height="3.600" fill="#a4a4a4"/><rect x="2644.100" y="1362" width="11.800" height="3.600" fill="#a4a4a4"/><rect x="2644.100" y="1368.2" width="11.800" height="3.600" fill="#a4a4a4"/><rect x="2685.700" y="1347.400" width="20.900" height="29.100" rx="2" fill="none" stroke="#a4a4a4" stroke-width="2"/><rect x="2690.0" y="1351.9" width="4.100" height="4.100" fill="#a4a4a4"/><rect x="2698.2" y="1351.9" width="4.100" height="4.100" fill="#a4a4a4"/><rect x="2694.1" y="1356.0" width="4.100" height="4.100" fill="#a4a4a4"/><rect x="2690.0" y="1360.1" width="4.100" height="4.100" fill="#a4a4a4"/><rect x="2698.2" y="1360.1" width="4.100" height="4.100" fill="#a4a4a4"/><rect x="2694.1" y="1364.1" width="4.100" height="4.100" fill="#a4a4a4"/><rect x="2690.0" y="1368.2" width="4.100" height="4.100" fill="#a4a4a4"/><rect x="2698.2" y="1368.2" width="4.100" height="4.100" fill="#a4a4a4"/><path d="M2737.200 1351.600V1349.200Q2737.200 1347.300 2739.100 1347.300H2745Q2746.900 1347.300 2746.900 1349.200V1351.600" fill="none" stroke="#a4a4a4" stroke-width="1.8" /><path d="M2731 1354.200V1353.500Q2731 1351.700 2732.800 1351.700H2751.200Q2753 1351.700 2753 1353.500V1354.200" fill="none" stroke="#a4a4a4" stroke-width="1.8" /><path d="M2733.100 1356V1374.600Q2733.100 1376.600 2735.100 1376.600H2749Q2751 1376.600 2751 1374.600V1356" fill="none" stroke="#a4a4a4" stroke-width="1.8" /><path d="M2738.900 1356V1372M2745 1356V1372" fill="none" stroke="#a4a4a4" stroke-width="1.8" /><path d="M2529.1 1596.268L2532.7 1600.732L2536.2999999999997 1596.268" fill="none" stroke="#8a8a8a" stroke-width="1.4" /><path d="M2705.2000000000003 1596.268L2708.8 1600.732L2712.4 1596.268" fill="none" stroke="#8a8a8a" stroke-width="1.4" /><path d="M2705.2 1648.644L2709 1653.356L2712.8 1648.644" fill="none" stroke="#d0d0d0" stroke-width="1.5" /><path d="M2736 1521.500V1508.500Q2736 1505 2739.500 1505H2744Q2747.500 1505 2747.500 1508.500V1514M2736 1526.500V1539.500Q2736 1543 2739.500 1543H2744Q2747.500 1543 2747.500 1539.500V1534M2733 1524H2750.800" fill="none" stroke="#a8a8a8" stroke-width="1.6" /><path d="M2656 1637.600H2682V1663H2677" fill="none" stroke="#d8d8d8" stroke-width="1.8" stroke-dasharray="6.500 3.200"/><rect x="2655" y="1649" width="16" height="15" rx="3.500" fill="#e0e0e0"/></svg>
<span style="left:86.7px;top:1706.9px;font-size:20px;color:#ffffff;font-weight:bold;-webkit-text-stroke:0;letter-spacing:0.41px;">Drag</span>
<span style="left:140.5px;top:1706.9px;font-size:20px;color:#b8b8b8;letter-spacing:0.83px;">to marquee select.</span>
<span style="left:326.8px;top:1706.9px;font-size:20px;color:#ffffff;font-weight:bold;-webkit-text-stroke:0;letter-spacing:0.62px;">Click</span>
<span style="left:383.3px;top:1706.9px;font-size:20px;color:#b8b8b8;letter-spacing:0.95px;">an object to select it.</span>
<div style="left:45px;top:37px;width:2724px;height:1701px;border:1px solid rgba(0,0,0,.55);border-radius:16px 16px 8px 8px;"></div>
</div></body></html>
